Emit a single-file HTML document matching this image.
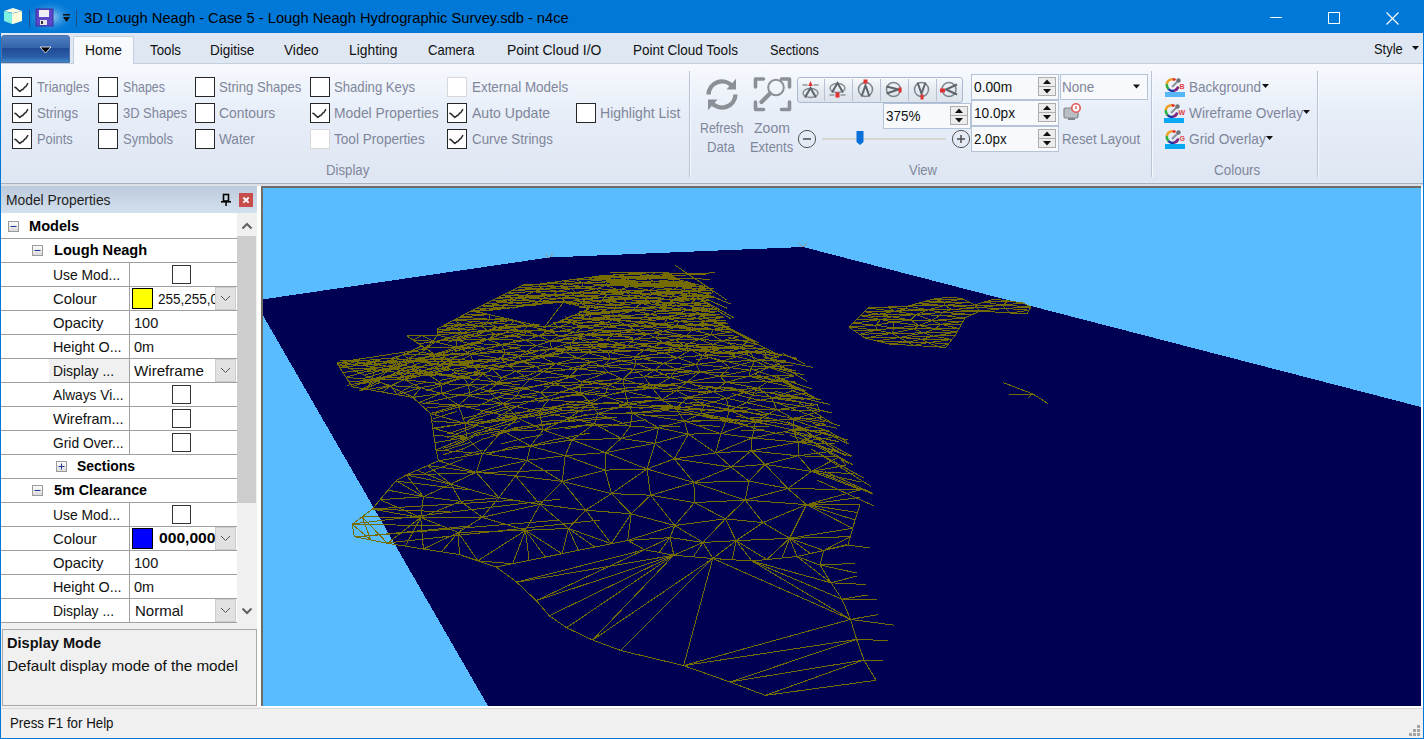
<!DOCTYPE html>
<html><head><meta charset="utf-8"><title>n4ce</title>
<style>
html,body{margin:0;padding:0;width:1424px;height:739px;overflow:hidden;background:#0078d7;}
body{position:relative;font-family:"Liberation Sans",sans-serif;}
.r{position:absolute;}
.t{position:absolute;white-space:nowrap;line-height:1.117;transform-origin:0 0;}
svg{overflow:visible}
</style></head><body>
<div class="r" style="left:0px;top:0px;width:1424px;height:739px;background:#0078d7;"></div>
<div class="r" style="left:1px;top:33px;width:1422px;height:30px;background:#dfe7f3;"></div>
<div class="r" style="left:1px;top:63px;width:1422px;height:119px;background:linear-gradient(#f7f9fe,#e7eef8 42%,#dee6f3);"></div>
<div class="r" style="left:1px;top:182px;width:1422px;height:1px;background:#e6ebf3;"></div>
<div class="r" style="left:1px;top:183px;width:1422px;height:1px;background:#a3b1c4;"></div>
<div class="r" style="left:1px;top:184px;width:1422px;height:3px;background:#dde0e6;"></div>
<div class="r" style="left:1px;top:187px;width:1422px;height:521px;background:#f0f0f0;"></div>
<div class="r" style="left:1px;top:708px;width:1422px;height:1px;background:#d9d9d9;"></div>
<div class="r" style="left:1px;top:709px;width:1422px;height:29px;background:#f0f0f0;"></div>
<svg class="r" style="left:0;top:0" width="90" height="33">
<defs><radialGradient id="glow" cx="0.5" cy="0.5" r="0.5"><stop offset="0" stop-color="#b9dcf7" stop-opacity="0.95"/><stop offset="1" stop-color="#0078d7" stop-opacity="0"/></radialGradient></defs>
<ellipse cx="50" cy="17" rx="26" ry="17" fill="url(#glow)"/>
<polygon points="4,11 13,8 22,11 13,13" fill="#fffde0"/>
<polygon points="4,11 12,13.5 12,24 4,21" fill="#7ef0e0"/>
<polygon points="13,13.5 22,11 22,21 13,24" fill="#fffcd8"/>
<line x1="12.5" y1="13" x2="12.5" y2="24" stroke="#e9f7f5" stroke-width="1"/>
<rect x="29" y="10" width="1" height="17" fill="#1b4f86"/>
<rect x="36" y="9" width="17" height="17" fill="#5b48c8"/>
<rect x="36" y="9" width="17" height="17" fill="none" stroke="#3d2f9e" stroke-width="1"/>
<rect x="39" y="10" width="10" height="7" fill="#eef0f6"/>
<rect x="40" y="20" width="7" height="5" fill="#e5e5ea"/>
<rect x="41" y="21" width="2" height="3" fill="#333"/>
<rect x="63" y="14" width="7" height="1.5" fill="#111"/>
<polygon points="63,17 70,17 66.5,22" fill="#111"/>
<rect x="76" y="10" width="1" height="17" fill="#1b4f86"/>
</svg>
<div class="t" style="left:83.80px;top:10.42px;font-size:15px;color:#000;transform:scaleX(0.9792);">3D Lough Neagh - Case 5 - Lough Neagh Hydrographic Survey.sdb - n4ce</div>
<div class="r" style="left:1270px;top:17px;width:12px;height:1px;background:#fff;"></div>
<div class="r" style="left:1328px;top:12px;width:12px;height:12px;border:1px solid #fff;box-sizing:border-box;"></div>
<svg class="r" style="left:1380px;top:6px" width="26" height="24"><path d="M6.5 6.5 L18.5 18.5 M18.5 6.5 L6.5 18.5" stroke="#fff" stroke-width="1.1"/></svg>
<div class="r" style="left:1px;top:35px;width:69px;height:28px;border:1px solid #4d6fa6;border-radius:3px 3px 0 0;box-sizing:border-box;background:linear-gradient(#4f7fc2,#3464aa 45%,#1f4a94 46%,#2b5ea8 80%,#3d86c8);"></div>
<svg class="r" style="left:38px;top:44px" width="16" height="12"><polygon points="2,3 13,3 7.5,9" fill="#000" stroke="#fff" stroke-width="0.8"/></svg>
<div class="r" style="left:73px;top:36px;width:61px;height:28px;background:linear-gradient(#f8fafd,#f5f8fc);border:1px solid #c2cfe0;border-bottom:none;border-radius:2px 2px 0 0;box-sizing:border-box;"></div>
<div class="r" style="left:1px;top:63px;width:1422px;height:1px;background:#c3cedf;"></div>
<div class="r" style="left:74px;top:63px;width:59px;height:1px;background:#f7f9fd;"></div>
<div class="t" style="left:85.00px;top:41.88px;font-size:14.5px;color:#111;transform:scaleX(0.9557);">Home</div>
<div class="t" style="left:150.00px;top:41.88px;font-size:14.5px;color:#111;transform:scaleX(0.9156);">Tools</div>
<div class="t" style="left:210.40px;top:41.88px;font-size:14.5px;color:#111;transform:scaleX(0.9315);">Digitise</div>
<div class="t" style="left:284.00px;top:41.88px;font-size:14.5px;color:#111;transform:scaleX(0.9422);">Video</div>
<div class="t" style="left:348.50px;top:41.88px;font-size:14.5px;color:#111;transform:scaleX(0.9543);">Lighting</div>
<div class="t" style="left:428.00px;top:41.88px;font-size:14.5px;color:#111;transform:scaleX(0.9008);">Camera</div>
<div class="t" style="left:506.50px;top:41.88px;font-size:14.5px;color:#111;transform:scaleX(0.9592);">Point Cloud I/O</div>
<div class="t" style="left:633.40px;top:41.88px;font-size:14.5px;color:#111;transform:scaleX(0.9317);">Point Cloud Tools</div>
<div class="t" style="left:770.20px;top:41.88px;font-size:14.5px;color:#111;transform:scaleX(0.8812);">Sections</div>
<div class="t" style="left:1374.00px;top:40.88px;font-size:14.5px;color:#111;transform:scaleX(0.8896);">Style</div>
<svg class="r" style="left:1410px;top:43px" width="12" height="10"><polygon points="2,3 9,3 5.5,7" fill="#111"/></svg>
<svg class="r" style="left:12px;top:77px" width="20" height="20"><rect x="0.5" y="0.5" width="19" height="19" fill="#fff" stroke="#262626" stroke-width="1"/><path d="M2.3 10.2 L3.5 10.4 L7.8 14.5 L10 12.6 L11 12.4 L12.8 10 L13.8 9.6 L16 6.2" fill="none" stroke="#2a2a2a" stroke-width="1.5" stroke-linejoin="round"/></svg>
<div class="t" style="left:36.50px;top:78.88px;font-size:14.5px;color:#80869a;transform:scaleX(0.8851);">Triangles</div>
<svg class="r" style="left:12px;top:103px" width="20" height="20"><rect x="0.5" y="0.5" width="19" height="19" fill="#fff" stroke="#262626" stroke-width="1"/><path d="M2.3 10.2 L3.5 10.4 L7.8 14.5 L10 12.6 L11 12.4 L12.8 10 L13.8 9.6 L16 6.2" fill="none" stroke="#2a2a2a" stroke-width="1.5" stroke-linejoin="round"/></svg>
<div class="t" style="left:36.50px;top:104.88px;font-size:14.5px;color:#80869a;transform:scaleX(0.9092);">Strings</div>
<svg class="r" style="left:12px;top:129px" width="20" height="20"><rect x="0.5" y="0.5" width="19" height="19" fill="#fff" stroke="#262626" stroke-width="1"/><path d="M2.3 10.2 L3.5 10.4 L7.8 14.5 L10 12.6 L11 12.4 L12.8 10 L13.8 9.6 L16 6.2" fill="none" stroke="#2a2a2a" stroke-width="1.5" stroke-linejoin="round"/></svg>
<div class="t" style="left:36.50px;top:130.88px;font-size:14.5px;color:#80869a;transform:scaleX(0.8881);">Points</div>
<svg class="r" style="left:98px;top:77px" width="20" height="20"><rect x="0.5" y="0.5" width="19" height="19" fill="#fff" stroke="#262626" stroke-width="1"/></svg>
<div class="t" style="left:122.50px;top:78.88px;font-size:14.5px;color:#80869a;transform:scaleX(0.8504);">Shapes</div>
<svg class="r" style="left:98px;top:103px" width="20" height="20"><rect x="0.5" y="0.5" width="19" height="19" fill="#fff" stroke="#262626" stroke-width="1"/></svg>
<div class="t" style="left:122.50px;top:104.88px;font-size:14.5px;color:#80869a;transform:scaleX(0.8917);">3D Shapes</div>
<svg class="r" style="left:98px;top:129px" width="20" height="20"><rect x="0.5" y="0.5" width="19" height="19" fill="#fff" stroke="#262626" stroke-width="1"/></svg>
<div class="t" style="left:122.50px;top:130.88px;font-size:14.5px;color:#80869a;transform:scaleX(0.8992);">Symbols</div>
<svg class="r" style="left:195px;top:77px" width="20" height="20"><rect x="0.5" y="0.5" width="19" height="19" fill="#fff" stroke="#262626" stroke-width="1"/></svg>
<div class="t" style="left:219.00px;top:78.88px;font-size:14.5px;color:#80869a;transform:scaleX(0.9049);">String Shapes</div>
<svg class="r" style="left:195px;top:103px" width="20" height="20"><rect x="0.5" y="0.5" width="19" height="19" fill="#fff" stroke="#262626" stroke-width="1"/></svg>
<div class="t" style="left:219.00px;top:104.88px;font-size:14.5px;color:#80869a;transform:scaleX(0.9563);">Contours</div>
<svg class="r" style="left:195px;top:129px" width="20" height="20"><rect x="0.5" y="0.5" width="19" height="19" fill="#fff" stroke="#262626" stroke-width="1"/></svg>
<div class="t" style="left:219.00px;top:130.88px;font-size:14.5px;color:#80869a;transform:scaleX(0.9388);">Water</div>
<svg class="r" style="left:310px;top:77px" width="20" height="20"><rect x="0.5" y="0.5" width="19" height="19" fill="#fff" stroke="#262626" stroke-width="1"/></svg>
<div class="t" style="left:334.00px;top:78.88px;font-size:14.5px;color:#80869a;transform:scaleX(0.9054);">Shading Keys</div>
<svg class="r" style="left:310px;top:103px" width="20" height="20"><rect x="0.5" y="0.5" width="19" height="19" fill="#fff" stroke="#262626" stroke-width="1"/><path d="M2.3 10.2 L3.5 10.4 L7.8 14.5 L10 12.6 L11 12.4 L12.8 10 L13.8 9.6 L16 6.2" fill="none" stroke="#2a2a2a" stroke-width="1.5" stroke-linejoin="round"/></svg>
<div class="t" style="left:334.00px;top:104.88px;font-size:14.5px;color:#80869a;transform:scaleX(0.9542);">Model Properties</div>
<svg class="r" style="left:310px;top:129px" width="20" height="20"><rect x="0.5" y="0.5" width="19" height="19" fill="#fff" stroke="#d8d8d8" stroke-width="1"/></svg>
<div class="t" style="left:334.00px;top:130.88px;font-size:14.5px;color:#80869a;transform:scaleX(0.9378);">Tool Properties</div>
<svg class="r" style="left:447px;top:77px" width="20" height="20"><rect x="0.5" y="0.5" width="19" height="19" fill="#fff" stroke="#d8d8d8" stroke-width="1"/></svg>
<div class="t" style="left:471.60px;top:78.88px;font-size:14.5px;color:#80869a;transform:scaleX(0.9243);">External Models</div>
<svg class="r" style="left:447px;top:103px" width="20" height="20"><rect x="0.5" y="0.5" width="19" height="19" fill="#fff" stroke="#262626" stroke-width="1"/><path d="M2.3 10.2 L3.5 10.4 L7.8 14.5 L10 12.6 L11 12.4 L12.8 10 L13.8 9.6 L16 6.2" fill="none" stroke="#2a2a2a" stroke-width="1.5" stroke-linejoin="round"/></svg>
<div class="t" style="left:471.60px;top:104.88px;font-size:14.5px;color:#80869a;transform:scaleX(0.9687);">Auto Update</div>
<svg class="r" style="left:447px;top:129px" width="20" height="20"><rect x="0.5" y="0.5" width="19" height="19" fill="#fff" stroke="#262626" stroke-width="1"/><path d="M2.3 10.2 L3.5 10.4 L7.8 14.5 L10 12.6 L11 12.4 L12.8 10 L13.8 9.6 L16 6.2" fill="none" stroke="#2a2a2a" stroke-width="1.5" stroke-linejoin="round"/></svg>
<div class="t" style="left:471.60px;top:130.88px;font-size:14.5px;color:#80869a;transform:scaleX(0.9207);">Curve Strings</div>
<svg class="r" style="left:576px;top:103px" width="20" height="20"><rect x="0.5" y="0.5" width="19" height="19" fill="#fff" stroke="#262626" stroke-width="1"/></svg>
<div class="t" style="left:600.00px;top:104.68px;font-size:14.5px;color:#80869a;transform:scaleX(0.9673);">Highlight List</div>
<div class="t" style="left:325.70px;top:161.88px;font-size:14.5px;color:#80869a;transform:scaleX(0.9104);">Display</div>
<div class="r" style="left:689px;top:71px;width:1px;height:106px;background:#b9c5d6;"></div>
<div class="r" style="left:690px;top:71px;width:1px;height:106px;background:#f5f8fc;"></div>
<svg class="r" style="left:700px;top:72px" width="100" height="45">
<g fill="none" stroke="#8c9096" stroke-width="4.4">
<path d="M8.5 22.5 A13.5 13.5 0 0 1 32.5 14.5"/>
<path d="M35.5 22.5 A13.5 13.5 0 0 1 11.5 30.5"/>
</g>
<g fill="#8c9096"><polygon points="26.5,17.6 36,6.8 36,17.6"/><polygon points="17.5,27.4 8,38.2 8,27.4"/></g>
<g fill="none" stroke="#8c9096" stroke-width="3.6" stroke-linecap="round" stroke-linejoin="round">
<path d="M55.5 15 V7 H63.5"/><path d="M81.5 7 H89.5 V15"/>
<path d="M55.5 30 V37.5 H63.5"/><path d="M81.5 37.5 H89.5 V30"/>
</g>
<circle cx="76" cy="15.5" r="7.8" fill="none" stroke="#8c9096" stroke-width="2"/>
<line x1="70" y1="21.5" x2="61.5" y2="30" stroke="#8c9096" stroke-width="4.2" stroke-linecap="round"/>
</svg>
<div class="t" style="left:699.60px;top:119.88px;font-size:14.5px;color:#80869a;transform:scaleX(0.8552);">Refresh</div>
<div class="t" style="left:707.40px;top:138.88px;font-size:14.5px;color:#80869a;transform:scaleX(0.9065);">Data</div>
<div class="t" style="left:754.00px;top:119.88px;font-size:14.5px;color:#80869a;transform:scaleX(0.9717);">Zoom</div>
<div class="t" style="left:750.40px;top:138.88px;font-size:14.5px;color:#80869a;transform:scaleX(0.8913);">Extents</div>
<div class="r" style="left:797px;top:77px;width:166px;height:26px;border:1px solid #a9b9d2;border-radius:3px;box-sizing:border-box;background:linear-gradient(#f7f9fc,#e4e9f1 55%,#dde3ec);"></div>
<div class="r" style="left:823.5px;top:79px;width:1px;height:22px;background:#b7c3d3;"></div>
<div class="r" style="left:851.5px;top:79px;width:1px;height:22px;background:#b7c3d3;"></div>
<div class="r" style="left:879.5px;top:79px;width:1px;height:22px;background:#b7c3d3;"></div>
<div class="r" style="left:907.5px;top:79px;width:1px;height:22px;background:#b7c3d3;"></div>
<div class="r" style="left:935.5px;top:79px;width:1px;height:22px;background:#b7c3d3;"></div>
<svg class="r" style="left:0;top:0" width="1000" height="110"><g transform="translate(810.5,89.5)"><ellipse cx="0" cy="3.5" rx="7.5" ry="4.5" fill="none" stroke="#858c92" stroke-width="1.4"/><path d="M-5.5 8 L0 -1.5 L5.5 8" fill="none" stroke="#5d646a" stroke-width="2"/><path d="M-8 -4.5 H-3 M3 -4.5 H8" stroke="#8f979d" stroke-width="1.4"/><polygon points="-2.2,-3.5 2.2,-3.5 0,-8.5" fill="#e03030"/></g><g transform="translate(837.5,89.5)"><ellipse cx="0" cy="-1.5" rx="7.5" ry="4.5" fill="none" stroke="#858c92" stroke-width="1.4"/><path d="M-5.5 3 L0 -6.5 L5.5 3" fill="none" stroke="#5d646a" stroke-width="2"/><path d="M-8 5.5 H-3 M3 5.5 H8" stroke="#8f979d" stroke-width="1.4"/><rect x="-2" y="3" width="4" height="5" fill="#e03030"/></g><g transform="translate(865.5,89.5)"><circle r="7" fill="none" stroke="#7d858c" stroke-width="1.5"/><path d="M-4 7 L0 -4 L4 7" fill="none" stroke="#5d646a" stroke-width="2"/><rect x="-2" y="-10" width="4" height="4" fill="#e03030"/></g><g transform="translate(893.5,89.5)"><circle r="7" fill="none" stroke="#7d858c" stroke-width="1.5"/><path d="M-7 -3 L5 0 L-7 4" fill="none" stroke="#5d646a" stroke-width="2"/><rect x="5" y="-2" width="3" height="5" fill="#e03030"/></g><g transform="translate(921.5,89.5)"><circle r="7" fill="none" stroke="#7d858c" stroke-width="1.5"/><path d="M-4 -7 L0 4 L4 -7" fill="none" stroke="#5d646a" stroke-width="2"/><rect x="-1" y="5" width="3" height="5" fill="#e03030"/></g><g transform="translate(949,89.5)"><circle r="7" fill="none" stroke="#7d858c" stroke-width="1.5"/><path d="M8 -5 L-3 0 L8 5" fill="none" stroke="#5d646a" stroke-width="2"/><rect x="-9" y="-1" width="5" height="4" fill="#e03030"/></g></svg>
<svg class="r" style="left:795px;top:125px" width="180" height="28">
<circle cx="12" cy="14" r="8.6" fill="none" stroke="#555" stroke-width="1"/>
<line x1="8" y1="14" x2="16" y2="14" stroke="#555" stroke-width="1.6"/>
<rect x="27" y="13" width="124" height="2" fill="#d6d6d0"/>
<path d="M61.5 6 H68.5 V17 L65 20 L61.5 17 Z" fill="#0a6fd8"/>
<circle cx="166" cy="14" r="8.6" fill="none" stroke="#555" stroke-width="1"/>
<line x1="162" y1="14" x2="170" y2="14" stroke="#555" stroke-width="1.6"/>
<line x1="166" y1="10" x2="166" y2="18" stroke="#555" stroke-width="1.6"/>
</svg>
<div class="r" style="left:883px;top:103px;width:88px;height:26px;border:1px solid #b5c3d8;box-sizing:border-box;background:#f7f9fc;"></div>
<svg class="r" style="left:950px;top:106px" width="18" height="19">
<rect x="0.5" y="0.5" width="17" height="9.0" fill="#ececec" stroke="#adadad"/>
<rect x="0.5" y="9.5" width="17" height="9.0" fill="#ececec" stroke="#adadad"/>
<polygon points="5.0,7.0 13.0,7.0 9.0,2.5" fill="#111"/>
<polygon points="5.0,12.0 13.0,12.0 9.0,16.5" fill="#111"/>
</svg>
<div class="r" style="left:971px;top:74px;width:88px;height:26px;border:1px solid #b5c3d8;box-sizing:border-box;background:#f7f9fc;"></div>
<svg class="r" style="left:1038px;top:77px" width="18" height="19">
<rect x="0.5" y="0.5" width="17" height="9.0" fill="#ececec" stroke="#adadad"/>
<rect x="0.5" y="9.5" width="17" height="9.0" fill="#ececec" stroke="#adadad"/>
<polygon points="5.0,7.0 13.0,7.0 9.0,2.5" fill="#111"/>
<polygon points="5.0,12.0 13.0,12.0 9.0,16.5" fill="#111"/>
</svg>
<div class="r" style="left:971px;top:100px;width:88px;height:26px;border:1px solid #b5c3d8;box-sizing:border-box;background:#f7f9fc;"></div>
<svg class="r" style="left:1038px;top:103px" width="18" height="19">
<rect x="0.5" y="0.5" width="17" height="9.0" fill="#ececec" stroke="#adadad"/>
<rect x="0.5" y="9.5" width="17" height="9.0" fill="#ececec" stroke="#adadad"/>
<polygon points="5.0,7.0 13.0,7.0 9.0,2.5" fill="#111"/>
<polygon points="5.0,12.0 13.0,12.0 9.0,16.5" fill="#111"/>
</svg>
<div class="r" style="left:971px;top:126px;width:88px;height:26px;border:1px solid #b5c3d8;box-sizing:border-box;background:#f7f9fc;"></div>
<svg class="r" style="left:1038px;top:129px" width="18" height="19">
<rect x="0.5" y="0.5" width="17" height="9.0" fill="#ececec" stroke="#adadad"/>
<rect x="0.5" y="9.5" width="17" height="9.0" fill="#ececec" stroke="#adadad"/>
<polygon points="5.0,7.0 13.0,7.0 9.0,2.5" fill="#111"/>
<polygon points="5.0,12.0 13.0,12.0 9.0,16.5" fill="#111"/>
</svg>
<div class="r" style="left:1060px;top:74px;width:88px;height:26px;border:1px solid #b5c3d8;box-sizing:border-box;background:#f7f9fc;"></div>
<svg class="r" style="left:1130px;top:80px" width="14" height="12"><polygon points="3,4.5 10,4.5 6.5,8.5" fill="#111"/></svg>
<div class="t" style="left:886.00px;top:108.38px;font-size:14.5px;color:#111;transform:scaleX(0.9267);">375%</div>
<div class="t" style="left:974.40px;top:78.88px;font-size:14.5px;color:#111;transform:scaleX(0.9477);">0.00m</div>
<div class="t" style="left:974.40px;top:104.88px;font-size:14.5px;color:#111;transform:scaleX(0.9410);">10.0px</div>
<div class="t" style="left:974.40px;top:130.88px;font-size:14.5px;color:#111;transform:scaleX(0.9195);">2.0px</div>
<div class="t" style="left:1062.30px;top:78.88px;font-size:14.5px;color:#80869a;transform:scaleX(0.9320);">None</div>
<svg class="r" style="left:1060px;top:101px" width="24" height="22">
<rect x="4" y="7" width="14" height="10" rx="1.5" fill="#b9bec4" stroke="#7f868c" stroke-width="1.2"/>
<rect x="8" y="17" width="7" height="2" fill="#7f868c"/>
<circle cx="16" cy="7" r="4.2" fill="#fff" stroke="#e05656" stroke-width="1.6"/>
<rect x="15.3" y="5" width="1.4" height="3" fill="#e05656"/>
</svg>
<div class="t" style="left:1062.30px;top:130.88px;font-size:14.5px;color:#80869a;transform:scaleX(0.9137);">Reset Layout</div>
<div class="t" style="left:908.70px;top:161.88px;font-size:14.5px;color:#80869a;transform:scaleX(0.8982);">View</div>
<div class="r" style="left:1151px;top:71px;width:1px;height:106px;background:#b9c5d6;"></div>
<div class="r" style="left:1152px;top:71px;width:1px;height:106px;background:#f5f8fc;"></div>
<svg class="r" style="left:1165px;top:77px" width="24" height="22">
<g fill="none" stroke-width="2.6">
<path d="M7.5 2.2 A5.8 5.8 0 0 0 1.8 7" stroke="#f0a020"/>
<path d="M1.8 7 A5.8 5.8 0 0 0 3.5 12" stroke="#30b040"/>
<path d="M3.5 12 A5.8 5.8 0 0 0 9 13.8" stroke="#2030a0"/>
<path d="M9 13.8 A5.8 5.8 0 0 0 13.2 9.5" stroke="#802080"/>
<path d="M7.5 2.2 A5.8 5.8 0 0 1 10.5 3" stroke="#e03020"/>
</g>
<path d="M7 10 L12.5 4.5" stroke="#8c939a" stroke-width="2.2"/>
<circle cx="13.5" cy="3.5" r="2.2" fill="#6c7378"/>
<text x="14.5" y="12" font-family="Liberation Sans" font-size="7" font-weight="bold" fill="#e04040">B</text>
<rect x="0" y="15" width="20" height="5" fill="#56b6f7"/>
</svg>
<svg class="r" style="left:1164px;top:103px" width="24" height="22">
<g fill="none" stroke-width="2.6">
<path d="M7.5 2.2 A5.8 5.8 0 0 0 1.8 7" stroke="#f0a020"/>
<path d="M1.8 7 A5.8 5.8 0 0 0 3.5 12" stroke="#30b040"/>
<path d="M3.5 12 A5.8 5.8 0 0 0 9 13.8" stroke="#2030a0"/>
<path d="M9 13.8 A5.8 5.8 0 0 0 13.2 9.5" stroke="#802080"/>
<path d="M7.5 2.2 A5.8 5.8 0 0 1 10.5 3" stroke="#e03020"/>
</g>
<path d="M7 10 L12.5 4.5" stroke="#8c939a" stroke-width="2.2"/>
<circle cx="13.5" cy="3.5" r="2.2" fill="#6c7378"/>
<text x="14.5" y="12" font-family="Liberation Sans" font-size="7" font-weight="bold" fill="#e04040">W</text>
<rect x="0" y="15" width="20" height="5" fill="#0aa9f5"/>
</svg>
<svg class="r" style="left:1165px;top:129px" width="24" height="22">
<g fill="none" stroke-width="2.6">
<path d="M7.5 2.2 A5.8 5.8 0 0 0 1.8 7" stroke="#f0a020"/>
<path d="M1.8 7 A5.8 5.8 0 0 0 3.5 12" stroke="#30b040"/>
<path d="M3.5 12 A5.8 5.8 0 0 0 9 13.8" stroke="#2030a0"/>
<path d="M9 13.8 A5.8 5.8 0 0 0 13.2 9.5" stroke="#802080"/>
<path d="M7.5 2.2 A5.8 5.8 0 0 1 10.5 3" stroke="#e03020"/>
</g>
<path d="M7 10 L12.5 4.5" stroke="#8c939a" stroke-width="2.2"/>
<circle cx="13.5" cy="3.5" r="2.2" fill="#6c7378"/>
<text x="14.5" y="12" font-family="Liberation Sans" font-size="7" font-weight="bold" fill="#e04040">G</text>
<rect x="0" y="15" width="20" height="5" fill="#0aa9f5"/>
</svg>
<div class="t" style="left:1189.00px;top:78.88px;font-size:14.5px;color:#80869a;transform:scaleX(0.9307);">Background</div>
<div class="t" style="left:1189.00px;top:104.88px;font-size:14.5px;color:#80869a;transform:scaleX(0.9433);">Wireframe Overlay</div>
<div class="t" style="left:1189.00px;top:130.88px;font-size:14.5px;color:#80869a;transform:scaleX(0.9429);">Grid Overlay</div>
<svg class="r" style="left:1260px;top:80px" width="60" height="70">
<polygon points="2,4 9,4 5.5,8" fill="#111"/>
<polygon points="43,30 50,30 46.5,34" fill="#111"/>
<polygon points="6,56 13,56 9.5,60" fill="#111"/>
</svg>
<div class="t" style="left:1213.50px;top:161.88px;font-size:14.5px;color:#80869a;transform:scaleX(0.9269);">Colours</div>
<div class="r" style="left:1317px;top:71px;width:1px;height:106px;background:#b9c5d6;"></div>
<div class="r" style="left:1318px;top:71px;width:1px;height:106px;background:#f5f8fc;"></div>
<div class="r" style="left:1px;top:186px;width:256px;height:27px;background:linear-gradient(#bccbdc,#d3e0ee);"></div>
<div class="r" style="left:257px;top:186px;width:4px;height:521px;background:#fff;"></div>
<div class="t" style="left:5.50px;top:191.88px;font-size:14.5px;color:#1e1e1e;transform:scaleX(0.9533);">Model Properties</div>
<svg class="r" style="left:219px;top:193px" width="14" height="14">
<rect x="4.5" y="1.5" width="5" height="6.5" fill="none" stroke="#000" stroke-width="1.6"/>
<rect x="2" y="8" width="10" height="1.6" fill="#000"/>
<rect x="6.3" y="9" width="1.5" height="4" fill="#000"/>
</svg>
<svg class="r" style="left:239px;top:193px" width="14" height="14">
<rect width="14" height="14" fill="#c94c4c"/>
<path d="M4.3 4.5 L9.7 9.7 M9.7 4.5 L4.3 9.7" stroke="#fff" stroke-width="1.8"/>
</svg>
<div class="r" style="left:1px;top:213px;width:236px;height:410px;background:#fff;"></div>
<div class="r" style="left:1px;top:238px;width:236px;height:1px;background:#a0a0a0;"></div>
<div class="r" style="left:1px;top:262px;width:236px;height:1px;background:#a0a0a0;"></div>
<div class="r" style="left:1px;top:286px;width:236px;height:1px;background:#a0a0a0;"></div>
<div class="r" style="left:1px;top:310px;width:236px;height:1px;background:#a0a0a0;"></div>
<div class="r" style="left:1px;top:334px;width:236px;height:1px;background:#a0a0a0;"></div>
<div class="r" style="left:1px;top:358px;width:236px;height:1px;background:#a0a0a0;"></div>
<div class="r" style="left:1px;top:382px;width:236px;height:1px;background:#a0a0a0;"></div>
<div class="r" style="left:1px;top:406px;width:236px;height:1px;background:#a0a0a0;"></div>
<div class="r" style="left:1px;top:430px;width:236px;height:1px;background:#a0a0a0;"></div>
<div class="r" style="left:1px;top:454px;width:236px;height:1px;background:#a0a0a0;"></div>
<div class="r" style="left:1px;top:478px;width:236px;height:1px;background:#a0a0a0;"></div>
<div class="r" style="left:1px;top:502px;width:236px;height:1px;background:#a0a0a0;"></div>
<div class="r" style="left:1px;top:526px;width:236px;height:1px;background:#a0a0a0;"></div>
<div class="r" style="left:1px;top:550px;width:236px;height:1px;background:#a0a0a0;"></div>
<div class="r" style="left:1px;top:574px;width:236px;height:1px;background:#a0a0a0;"></div>
<div class="r" style="left:1px;top:598px;width:236px;height:1px;background:#a0a0a0;"></div>
<div class="r" style="left:1px;top:622px;width:236px;height:1px;background:#a0a0a0;"></div>
<div class="r" style="left:129px;top:262px;width:1px;height:24px;background:#a0a0a0;"></div>
<div class="r" style="left:129px;top:286px;width:1px;height:24px;background:#a0a0a0;"></div>
<div class="r" style="left:129px;top:310px;width:1px;height:24px;background:#a0a0a0;"></div>
<div class="r" style="left:129px;top:334px;width:1px;height:24px;background:#a0a0a0;"></div>
<div class="r" style="left:129px;top:358px;width:1px;height:24px;background:#a0a0a0;"></div>
<div class="r" style="left:129px;top:382px;width:1px;height:24px;background:#a0a0a0;"></div>
<div class="r" style="left:129px;top:406px;width:1px;height:24px;background:#a0a0a0;"></div>
<div class="r" style="left:129px;top:430px;width:1px;height:24px;background:#a0a0a0;"></div>
<div class="r" style="left:129px;top:502px;width:1px;height:24px;background:#a0a0a0;"></div>
<div class="r" style="left:129px;top:526px;width:1px;height:24px;background:#a0a0a0;"></div>
<div class="r" style="left:129px;top:550px;width:1px;height:24px;background:#a0a0a0;"></div>
<div class="r" style="left:129px;top:574px;width:1px;height:24px;background:#a0a0a0;"></div>
<div class="r" style="left:129px;top:598px;width:1px;height:24px;background:#a0a0a0;"></div>
<div class="r" style="left:49px;top:359px;width:80px;height:23px;background:#f0f0f0;"></div>
<svg class="r" style="left:8px;top:221px" width="12" height="12">
<defs><linearGradient id="eg" x1="0" y1="0" x2="0" y2="1"><stop offset="0" stop-color="#fff"/><stop offset="1" stop-color="#d8d8d8"/></linearGradient></defs>
<rect x="0.5" y="0.5" width="10" height="10" fill="url(#eg)" stroke="#9a9a9a"/>
<rect x="2.5" y="5" width="6" height="1" fill="#23379a"/>

</svg>
<svg class="r" style="left:32px;top:245px" width="12" height="12">
<defs><linearGradient id="eg" x1="0" y1="0" x2="0" y2="1"><stop offset="0" stop-color="#fff"/><stop offset="1" stop-color="#d8d8d8"/></linearGradient></defs>
<rect x="0.5" y="0.5" width="10" height="10" fill="url(#eg)" stroke="#9a9a9a"/>
<rect x="2.5" y="5" width="6" height="1" fill="#23379a"/>

</svg>
<svg class="r" style="left:56px;top:461px" width="12" height="12">
<defs><linearGradient id="eg" x1="0" y1="0" x2="0" y2="1"><stop offset="0" stop-color="#fff"/><stop offset="1" stop-color="#d8d8d8"/></linearGradient></defs>
<rect x="0.5" y="0.5" width="10" height="10" fill="url(#eg)" stroke="#9a9a9a"/>
<rect x="2.5" y="5" width="6" height="1" fill="#23379a"/>
<rect x="5" y="2.5" width="1" height="6" fill="#23379a"/>
</svg>
<svg class="r" style="left:32px;top:485px" width="12" height="12">
<defs><linearGradient id="eg" x1="0" y1="0" x2="0" y2="1"><stop offset="0" stop-color="#fff"/><stop offset="1" stop-color="#d8d8d8"/></linearGradient></defs>
<rect x="0.5" y="0.5" width="10" height="10" fill="url(#eg)" stroke="#9a9a9a"/>
<rect x="2.5" y="5" width="6" height="1" fill="#23379a"/>

</svg>
<div class="t" style="left:29.40px;top:218.43px;font-size:15px;color:#000;font-weight:bold;transform:scaleX(0.9715);">Models</div>
<div class="t" style="left:53.80px;top:242.43px;font-size:15px;color:#000;font-weight:bold;transform:scaleX(0.9724);">Lough Neagh</div>
<div class="t" style="left:77.00px;top:458.43px;font-size:15px;color:#000;font-weight:bold;transform:scaleX(0.9273);">Sections</div>
<div class="t" style="left:53.60px;top:482.43px;font-size:15px;color:#000;font-weight:bold;transform:scaleX(0.9541);">5m Clearance</div>
<div class="t" style="left:53.40px;top:266.88px;font-size:14.5px;color:#111;transform:scaleX(0.9571);">Use Mod...</div>
<div class="t" style="left:53.40px;top:290.88px;font-size:14.5px;color:#111;transform:scaleX(1.0210);">Colour</div>
<div class="t" style="left:53.40px;top:314.88px;font-size:14.5px;color:#111;transform:scaleX(1.0253);">Opacity</div>
<div class="t" style="left:53.40px;top:338.88px;font-size:14.5px;color:#111;transform:scaleX(0.9898);">Height O...</div>
<div class="t" style="left:53.40px;top:362.88px;font-size:14.5px;color:#111;transform:scaleX(0.9583);">Display ...</div>
<div class="t" style="left:53.40px;top:386.88px;font-size:14.5px;color:#111;transform:scaleX(0.9454);">Always Vi...</div>
<div class="t" style="left:53.40px;top:410.88px;font-size:14.5px;color:#111;transform:scaleX(0.9957);">Wirefram...</div>
<div class="t" style="left:53.40px;top:434.88px;font-size:14.5px;color:#111;transform:scaleX(0.9528);">Grid Over...</div>
<div class="t" style="left:53.40px;top:506.88px;font-size:14.5px;color:#111;transform:scaleX(0.9571);">Use Mod...</div>
<div class="t" style="left:53.40px;top:530.88px;font-size:14.5px;color:#111;transform:scaleX(1.0210);">Colour</div>
<div class="t" style="left:53.40px;top:554.88px;font-size:14.5px;color:#111;transform:scaleX(1.0253);">Opacity</div>
<div class="t" style="left:53.40px;top:578.88px;font-size:14.5px;color:#111;transform:scaleX(0.9898);">Height O...</div>
<div class="t" style="left:53.40px;top:602.88px;font-size:14.5px;color:#111;transform:scaleX(0.9583);">Display ...</div>
<div class="r" style="left:172px;top:265px;width:19px;height:19px;border:1px solid #333;box-sizing:border-box;background:#fff;"></div>
<div class="r" style="left:172px;top:385px;width:19px;height:19px;border:1px solid #333;box-sizing:border-box;background:#fff;"></div>
<div class="r" style="left:172px;top:409px;width:19px;height:19px;border:1px solid #333;box-sizing:border-box;background:#fff;"></div>
<div class="r" style="left:172px;top:433px;width:19px;height:19px;border:1px solid #333;box-sizing:border-box;background:#fff;"></div>
<div class="r" style="left:172px;top:505px;width:19px;height:19px;border:1px solid #333;box-sizing:border-box;background:#fff;"></div>
<div class="r" style="left:132px;top:288px;width:21px;height:21px;background:#ff0;border:1px solid #000;box-sizing:border-box;"></div>
<div class="r" style="left:155px;top:287px;width:60px;height:23px;overflow:hidden">
<div class="t" style="left:3.40px;top:3.88px;font-size:14.5px;color:#111;transform:scaleX(0.9313);">255,255,0</div>
</div>
<svg class="r" style="left:215px;top:287px" width="21" height="23">
<rect x="0.5" y="0.5" width="20" height="22" fill="#e1e1e1" stroke="#cdcdcd"/>
<path d="M6 9 L10.5 13.5 L15 9" fill="none" stroke="#555" stroke-width="1"/>
</svg>
<div class="t" style="left:134.00px;top:314.88px;font-size:14.5px;color:#111;">100</div>
<div class="t" style="left:134.00px;top:338.88px;font-size:14.5px;color:#111;">0m</div>
<div class="t" style="left:134.00px;top:362.88px;font-size:14.5px;color:#111;transform:scaleX(1.0442);">Wireframe</div>
<svg class="r" style="left:215px;top:359px" width="21" height="23">
<rect x="0.5" y="0.5" width="20" height="22" fill="#e1e1e1" stroke="#cdcdcd"/>
<path d="M6 9 L10.5 13.5 L15 9" fill="none" stroke="#555" stroke-width="1"/>
</svg>
<div class="r" style="left:132px;top:528px;width:21px;height:21px;background:#00f;border:1px solid #000;box-sizing:border-box;"></div>
<div class="r" style="left:155px;top:527px;width:60px;height:23px;overflow:hidden">
<div class="t" style="left:3.50px;top:3.42px;font-size:15px;color:#000;font-weight:bold;transform:scaleX(1.0420);">000,000,255</div>
</div>
<svg class="r" style="left:215px;top:527px" width="21" height="23">
<rect x="0.5" y="0.5" width="20" height="22" fill="#e1e1e1" stroke="#cdcdcd"/>
<path d="M6 9 L10.5 13.5 L15 9" fill="none" stroke="#555" stroke-width="1"/>
</svg>
<div class="t" style="left:134.00px;top:554.88px;font-size:14.5px;color:#111;">100</div>
<div class="t" style="left:134.00px;top:578.88px;font-size:14.5px;color:#111;">0m</div>
<div class="t" style="left:134.60px;top:602.88px;font-size:14.5px;color:#111;transform:scaleX(1.0350);">Normal</div>
<svg class="r" style="left:215px;top:599px" width="21" height="23">
<rect x="0.5" y="0.5" width="20" height="22" fill="#e1e1e1" stroke="#cdcdcd"/>
<path d="M6 9 L10.5 13.5 L15 9" fill="none" stroke="#555" stroke-width="1"/>
</svg>
<div class="r" style="left:237px;top:214px;width:20px;height:409px;background:#f0f0f0;"></div>
<div class="r" style="left:237px;top:236px;width:19px;height:267px;background:#cdcdcd;"></div>
<svg class="r" style="left:237px;top:214px" width="20" height="409">
<path d="M5.5 14.5 L10 10 L14.5 14.5" fill="none" stroke="#606060" stroke-width="2"/>
<path d="M5.5 394.5 L10 399 L14.5 394.5" fill="none" stroke="#606060" stroke-width="2"/>
</svg>
<div class="r" style="left:1px;top:623px;width:256px;height:84px;background:#f0f0f0;"></div>
<div class="r" style="left:2px;top:629px;width:255px;height:77px;border:1px solid #a8a8a8;box-sizing:border-box;background:#f0f0f0;"></div>
<div class="t" style="left:7.00px;top:635.42px;font-size:15px;color:#111;font-weight:bold;transform:scaleX(0.9723);">Display Mode</div>
<div class="t" style="left:7.00px;top:657.88px;font-size:14.5px;color:#111;transform:scaleX(1.0536);">Default display mode of the model</div>
<div class="t" style="left:10.00px;top:714.88px;font-size:14.5px;color:#111;transform:scaleX(0.9175);">Press F1 for Help</div>
<svg class="r" style="left:1408px;top:724px" width="14" height="13"><g fill="#a5a5a5">
<rect x="9" y="1" width="3" height="3"/><rect x="5" y="5" width="3" height="3"/><rect x="9" y="5" width="3" height="3"/>
<rect x="1" y="9" width="3" height="3"/><rect x="5" y="9" width="3" height="3"/><rect x="9" y="9" width="3" height="3"/></g></svg>
<div class="r" style="left:261px;top:186px;width:1162px;height:522px;background:#fff;"></div>
<div class="r" style="left:261px;top:186px;width:1160px;height:2px;background:#6e6b68;"></div>
<div class="r" style="left:261px;top:186px;width:2px;height:520px;background:#6e6b68;"></div>
<svg class="r" style="left:263px;top:188px;overflow:hidden" width="1158" height="518" viewBox="263 188 1158 518" shape-rendering="crispEdges">
<rect x="263" y="188" width="1158" height="518" fill="#58bcff"/>
<polygon points="262,299.5 549,257.5 803,247 1421,407 1421,706 488,706 263,315.5" fill="#000052"/>
<path d="M562.3 481.4L515.5 475.8M749.0 481.1L731.1 467.1M420.7 517.5L423.5 496.7M550.3 341.2L577.7 338.7M470.4 353.7L444.3 359.1M615.7 305.0L634.6 307.7M413.0 340.0L407.0 336.0M668.0 272.0L670.7 274.3M745.1 500.1L787.9 488.6M454.0 320.0L463.1 325.5M673.3 276.7L649.2 278.8M486.6 303.2L501.3 305.4M575.4 279.2L596.1 280.0M670.7 274.3L673.3 276.7M748.7 340.1L722.0 340.8M590.0 342.3L577.7 338.7M674.8 525.5L725.4 518.8M500.7 358.8L472.7 365.8M577.9 358.0L538.4 355.9M512.6 290.2L533.6 291.6M540.0 284.0L557.9 286.6M712.8 558.5L693.3 556.9M538.4 355.9L518.9 356.7M638.4 283.4L619.2 283.8M758.2 343.9L740.1 348.3M542.7 298.3L514.3 297.7M693.3 556.9L673.8 555.2M587.2 277.6L615.2 277.0M715.6 452.9L720.9 433.6M433.8 435.4L432.8 428.2M725.7 382.3L749.6 376.1M437.0 335.0L456.8 340.2M486.8 322.5L514.0 320.5M514.1 302.7L501.3 305.4M602.6 300.8L603.6 297.6M571.9 288.6L557.6 291.3M607.7 281.9L613.9 279.2M581.3 381.8L623.0 379.3M596.5 288.7L600.7 291.7M655.3 337.7L634.3 339.4M638.4 283.4L629.9 286.2M487.9 391.0L517.3 395.7M665.0 353.1L683.7 345.7M749.0 481.1L745.1 500.1M487.9 330.5L456.5 329.0M615.9 308.0L601.5 309.7M518.2 418.2L543.3 429.9M437.0 335.0L433.3 341.3M582.7 282.9L607.7 281.9M518.2 418.2L539.1 411.5M594.8 547.0L578.4 550.4M665.0 353.1L690.6 349.9M638.4 283.4L625.3 281.0M579.4 311.9L582.8 311.9M798.1 455.8L798.2 442.1M688.3 434.1L655.0 443.3M565.7 302.0L585.3 299.3M412.8 397.4L397.6 394.8M860.3 497.3L806.5 504.6M627.2 292.7L600.7 291.7M456.7 347.1L468.7 343.6M624.7 299.5L602.6 300.8M789.6 538.3L763.0 522.6M860.0 505.0L806.5 504.6M501.5 344.5L468.7 343.6M580.2 303.3L568.8 304.2M411.9 360.9L435.5 363.8M634.6 356.8L644.2 350.2M699.8 372.0L670.5 377.6M529.7 305.2L550.6 303.2M712.8 290.9L695.7 288.7M561.5 298.1L585.3 299.3M615.0 315.9L642.1 317.8M712.6 344.4L710.4 349.3M438.5 460.8L476.2 472.3M607.9 372.3L633.6 369.2M640.0 321.9L663.6 323.6M422.0 335.5L437.0 335.0M670.5 377.6L676.1 369.0M572.0 439.9L543.3 429.9M434.9 442.7L466.6 437.4M755.6 421.5L729.4 410.3M527.1 460.3L476.2 472.3M676.0 279.0L683.5 280.9M605.5 452.6L565.2 455.6M696.9 324.9L679.3 321.2M607.9 372.3L602.8 366.4M538.6 335.7L523.5 330.7M628.0 404.3L661.8 399.6M565.2 455.6L527.1 460.3M522.1 362.1L536.4 366.4M662.9 331.3L635.1 330.2M794.8 381.3L767.6 381.8M375.3 368.6L399.7 373.0M580.6 393.0L604.2 395.9M466.6 437.4L482.5 453.5M570.8 322.5L606.8 322.6M346.0 377.3L375.3 368.6M575.8 292.6L600.7 291.7M569.2 418.0L594.5 423.9M624.7 391.1L652.2 388.0M798.8 388.6L767.6 381.8M662.9 331.3L648.4 334.1M540.6 392.4L517.3 395.7M708.2 300.5L690.6 303.6M768.8 367.4L750.2 370.1M572.0 439.9L621.1 438.5M528.3 325.8L538.8 324.6M721.6 361.3L737.0 356.7M550.3 341.2L536.5 345.6M598.6 330.0L582.8 327.1M515.9 371.3L530.0 379.3M661.8 399.6L675.7 408.2M454.0 320.0L459.7 317.0M550.3 341.2L559.6 336.0M674.9 327.3L691.9 330.0M588.3 334.8L614.8 334.1M635.7 363.6L602.8 366.4M712.8 290.9L712.0 293.1M650.6 495.2L694.4 502.6M698.6 284.8L679.0 286.6M562.3 481.4L611.5 493.6M465.3 314.0L490.1 314.5M676.4 390.5L688.8 397.0M657.0 272.0L670.7 274.3M674.6 302.9L675.9 305.6M562.0 553.7L545.5 557.0M487.9 339.4L515.3 336.1M545.5 557.0L529.1 560.4M740.1 348.3L712.6 344.4M642.0 303.3L615.7 305.0M578.4 550.4L568.5 528.4M731.1 467.1L751.2 450.9M367.2 389.4L352.0 386.8M680.1 313.0L688.0 315.9M675.9 293.1L663.0 291.6M684.3 421.1L726.1 420.6M501.7 377.7L497.1 384.0M614.8 334.1L605.7 339.8M550.3 341.2L570.5 342.7M585.3 299.3L603.6 297.6M404.3 379.8L399.7 373.0M420.7 387.7L390.4 385.6M373.7 359.7L375.3 368.6M610.3 358.8L588.2 352.9M766.9 559.5L736.0 540.7M442.2 383.7L468.6 384.9M575.4 279.2L582.7 282.9M590.0 342.3L570.5 342.7M697.8 318.4L667.5 318.7M492.0 369.1L472.7 365.8M587.2 277.6L596.1 280.0M594.5 423.9L621.1 438.5M703.0 542.4L725.4 518.8M500.7 358.8L509.5 366.1M633.5 310.7L634.6 307.7M543.3 371.8L555.4 363.7M538.8 301.6L529.7 305.2M654.4 370.2L635.7 363.6M515.9 371.3L536.4 366.4M580.6 393.0L540.6 392.4M627.4 345.6L605.7 339.8M683.5 280.9L654.2 281.6M725.7 382.3L686.9 382.0M667.5 318.7L688.0 315.9M839.0 457.0L798.1 455.8M655.6 287.0L655.5 284.5M860.7 489.7L806.5 504.6M525.3 340.3L538.6 335.7M465.0 423.4L458.4 405.2M592.8 346.8L571.0 347.7M557.9 286.6L539.7 286.7M472.3 360.3L470.4 353.7M431.7 420.9L465.0 423.4M797.0 556.5L789.6 538.3M667.5 318.7L663.6 323.6M765.0 464.4L751.2 450.9M572.0 439.9L594.5 423.9M577.9 368.9L570.0 376.1M465.3 314.0L471.0 311.0M430.6 413.6L465.0 423.4M776.7 409.5L729.4 410.3M525.3 340.3L501.5 344.5M372.2 509.2L420.7 517.5M585.3 299.3L587.3 296.0M699.8 372.0L686.9 382.0M729.9 367.6L696.3 364.5M500.7 358.8L505.0 352.5M454.0 320.0L489.2 319.2M611.5 493.6L605.1 470.1M766.9 559.5L751.9 561.0M655.6 287.0L674.1 289.2M380.1 499.7L420.7 517.5M603.6 297.6L630.5 295.3M427.8 465.5L438.5 460.8M388.1 490.2L423.5 496.7M512.6 563.7L496.2 567.0M555.4 363.7L591.6 361.9M349.0 382.0L346.0 377.3M794.3 375.9L767.6 381.8M486.2 348.6L468.7 343.6M577.9 368.9L602.8 366.4M548.7 399.8L540.6 392.4M497.1 384.0L482.8 374.4M629.9 286.2L619.3 289.9M658.7 311.1L652.1 307.0M515.5 475.8L527.1 460.3M668.4 282.7L678.9 284.4M465.0 423.4L502.2 430.5M435.5 363.8L472.7 365.8M596.5 288.7L582.7 286.7M615.2 277.0L613.9 279.2M502.2 295.4L507.4 292.8M794.3 375.9L749.6 376.1M433.8 435.4L466.6 437.4M411.9 360.9L395.8 364.4M776.7 409.5L771.8 398.1M612.1 312.8L601.5 309.7M607.7 281.9L619.2 283.8M477.8 560.8L525.5 530.3M470.4 353.7L505.0 352.5M635.1 330.2L648.4 334.1M551.4 348.8L538.4 355.9M611.3 543.7L568.5 528.4M690.1 291.0L675.9 293.1M652.5 294.6L671.9 296.5M730.2 326.2L712.4 329.4M608.1 352.4L588.2 352.9M649.2 326.9L626.2 324.9M525.5 530.3L540.0 504.4M669.5 307.9L675.9 305.6M515.5 475.8L476.2 472.3M397.6 394.8L390.4 385.6M579.3 312.8L582.8 311.9M425.0 348.0L419.0 344.0M696.9 324.9L691.9 330.0M754.8 360.8L721.6 361.3M563.6 280.8L582.7 282.9M657.0 272.0L668.0 272.0M571.9 288.6L575.8 292.6M709.8 306.1L687.9 309.7M806.5 504.6L763.0 522.6M487.9 330.5L523.5 330.7M607.7 281.9L625.3 281.0M471.0 311.0L478.6 312.4M482.2 517.3L420.7 517.5M716.9 311.6L703.0 314.1M650.6 495.2L631.2 513.8M606.8 322.6L626.2 324.9M570.5 342.7L577.7 338.7M526.4 351.4L518.9 356.7M686.3 335.9L675.7 339.6M676.0 279.0L654.2 281.6M627.7 540.4L674.8 525.5M670.5 377.6L644.3 376.9M551.4 348.8L536.5 345.6M697.8 318.4L703.0 314.1M451.3 369.5L482.8 374.4M823.7 550.5L789.6 538.3M437.0 332.0L437.0 329.0M571.9 288.6L557.9 286.6M572.0 439.9L565.2 455.6M696.9 324.9L712.4 329.4M757.9 388.1L726.4 398.2M437.0 329.0L442.7 326.0M533.6 291.6L557.6 291.3M691.0 282.9L698.6 284.8M749.0 481.1L787.9 488.6M441.1 393.4L468.6 384.9M585.6 510.2L631.2 513.8M696.0 298.9L671.9 296.5M698.6 284.8L706.1 286.8M536.4 305.4L529.7 305.2M817.0 404.6L820.0 411.1M676.4 390.5L686.9 382.0M472.3 360.3L472.7 365.8M611.3 543.7L594.8 547.0M362.2 516.8L420.7 517.5M693.9 482.5L731.1 467.1M418.7 402.8L412.8 397.4M472.7 365.8L509.5 366.1M590.4 307.3L597.1 304.1M605.7 339.8L577.7 338.7M502.2 430.5L466.6 437.4M588.3 334.8L605.7 339.8M615.0 315.9L588.7 318.4M380.1 499.7L423.5 496.7M814.0 398.0L771.8 398.1M551.4 348.8L570.5 342.7M489.2 319.2L490.1 314.5M543.3 429.9L594.5 423.9M615.0 315.9L613.2 319.3M628.0 404.3L597.9 413.5M782.0 558.0L789.6 538.3M503.3 403.7L517.3 395.7M413.0 340.0L422.0 335.5M633.5 310.7L658.7 311.1M522.1 362.1L555.4 363.7M411.9 360.9L416.5 367.4M684.3 421.1L675.7 408.2M436.0 450.0L466.6 437.4M638.4 283.4L654.2 281.6M661.8 399.6L676.4 390.5M561.5 298.1L538.8 301.6M652.5 294.6L643.8 297.8M459.7 317.0L489.2 319.2M690.6 303.6L696.0 298.9M528.3 325.8L523.5 330.7M470.4 353.7L500.7 358.8M755.6 421.5L794.0 419.0M635.1 330.2L614.8 334.1M693.9 482.5L745.1 500.1M554.5 383.3L521.0 388.0M623.0 379.3L608.9 385.3M486.8 322.5L463.1 325.5M673.3 276.7L650.5 275.6M575.8 292.6L557.6 291.3M438.5 460.8L482.5 453.5M482.2 517.3L498.9 497.7M696.0 298.9L674.6 302.9M590.0 342.3L592.8 346.8M442.7 326.0L448.3 323.0M553.0 295.3L542.7 298.3M669.5 307.9L658.7 311.1M448.3 323.0L454.0 320.0M432.8 428.2L466.6 437.4M581.3 381.8L580.6 393.0M565.5 352.5L571.0 347.7M713.2 391.8L688.8 397.0M538.6 335.7L548.4 330.7M456.8 340.2L474.7 336.1M459.7 317.0L490.1 314.5M538.6 335.7L550.3 341.2M628.0 404.3L590.6 403.1M655.6 287.0L629.9 286.2M578.4 550.4L562.0 553.7M629.9 286.2L655.5 284.5M371.8 379.9L399.7 373.0M711.5 334.6L691.9 330.0M699.8 372.0L720.0 376.2M673.8 555.2L670.0 537.6M495.0 334.3L487.9 330.5M684.3 421.1L720.9 433.6M397.6 394.8L382.4 392.1M676.4 390.5L652.2 388.0M456.8 340.2L462.6 332.8M642.0 303.3L661.4 304.8M444.3 359.1L472.7 365.8M853.7 473.7L811.5 471.4M382.4 392.1L390.4 385.6M450.8 484.1L498.9 497.7M597.9 413.5L630.2 426.1M481.4 305.8L486.6 303.2M611.3 543.7L585.6 510.2M690.6 303.6L675.9 305.6M655.5 284.5L678.9 284.4M779.2 356.6L750.4 352.2M839.0 457.0L846.3 465.3M587.3 296.0L575.8 292.6M627.4 345.6L608.1 352.4M729.4 410.3L726.4 398.2M403.0 354.7L411.9 360.9M580.6 393.0L608.9 385.3M724.1 317.1L697.8 318.4M477.8 560.8L459.4 554.6M720.5 314.3L703.0 314.1M729.9 367.6L750.2 370.1M543.3 371.8L570.0 376.1M459.4 554.6L441.4 551.8M627.4 345.6L634.3 339.4M343.0 372.5L340.0 367.8M607.5 326.9L635.1 330.2M530.4 446.1L543.3 429.9M806.5 504.6L787.9 488.6M470.4 353.7L456.7 347.1M450.8 484.1L423.5 496.7M399.7 373.0L395.8 364.4M524.2 295.9L542.7 298.3M562.3 481.4L605.1 470.1M605.5 452.6L647.0 469.0M572.0 295.2L553.0 295.3M577.9 358.0L565.5 352.5M680.1 313.0L687.9 309.7M810.4 553.5L789.6 538.3M538.8 301.6L514.1 302.7M597.9 413.5L632.4 413.1M691.0 282.9L678.9 284.4M424.7 408.2L458.4 405.2M649.5 290.4L629.9 286.2M596.5 288.7L619.3 289.9M456.8 340.2L456.7 347.1M442.7 326.0L463.1 325.5M607.3 294.4L575.8 292.6M487.9 391.0L469.7 395.7M615.7 305.0L597.1 304.1M482.5 453.5L527.1 460.3M525.3 340.3L550.3 341.2M501.5 344.5L487.9 339.4M561.5 298.1L542.7 298.3M674.9 327.3L663.6 323.6M572.0 295.2L587.3 296.0M688.3 434.1L674.2 458.9M826.0 424.3L794.0 419.0M817.0 404.6L771.8 398.1M627.2 292.7L619.3 289.9M375.3 368.6L395.8 364.4M663.3 363.4L677.5 357.6M766.9 559.5L789.6 538.3M598.6 330.0L607.5 326.9M725.7 382.3L767.6 381.8M711.1 295.4L689.2 295.3M679.0 286.6L678.9 284.4M726.4 398.2L688.8 397.0M580.2 303.3L585.3 299.3M754.8 360.8L737.0 356.7M670.5 377.6L654.4 370.2M502.2 295.4L524.2 295.9M652.5 294.6L649.5 290.4M491.8 300.6L497.0 298.0M598.6 330.0L575.3 332.3M605.5 452.6L572.0 439.9M634.6 307.7L652.1 307.0M559.6 336.0L548.4 330.7M605.0 285.4L596.5 288.7M571.0 347.7L588.2 352.9M676.0 279.0L649.2 278.8M497.0 298.0L502.2 295.4M525.5 530.3L458.3 532.4M482.5 453.5L476.2 472.3M662.9 331.3L655.3 337.7M623.0 379.3L607.9 372.3M628.7 278.8L613.9 279.2M502.2 430.5L482.5 453.5M558.7 326.9L582.8 327.1M749.6 376.1L768.8 367.4M649.2 278.8L625.3 281.0M432.8 428.2L431.7 420.9M373.7 359.7L395.8 364.4M697.8 318.4L688.0 315.9M644.3 376.9L633.6 369.2M423.4 549.0L405.4 546.1M658.7 311.1L687.9 309.7M612.1 312.8L615.9 308.0M501.3 305.4L506.6 308.3M652.5 294.6L630.5 295.3M605.0 285.4L582.7 286.7M665.0 353.1L644.2 350.2M705.6 321.2L679.3 321.2M468.6 384.9L482.8 374.4M699.4 339.4L686.3 335.9M514.1 302.7L508.1 299.8M839.0 457.0L811.5 471.4M642.0 303.3L652.1 307.0M703.9 404.7L688.8 397.0M776.7 409.5L746.7 402.6M436.0 450.0L482.5 453.5M675.7 408.2L632.4 413.1M525.5 530.3L482.2 517.3M647.0 469.0L650.6 495.2M349.0 382.0L371.8 379.9M523.5 330.7L515.3 336.1M706.1 286.8L695.7 288.7M726.1 420.6L701.2 413.6M540.0 504.4L585.6 510.2M486.8 322.5L481.0 326.1M558.7 326.9L548.4 330.7M442.7 326.0L456.5 329.0M680.1 313.0L650.6 314.3M607.9 372.3L570.0 376.1M512.6 563.7L477.8 560.8M392.0 358.0L411.9 360.9M372.2 509.2L380.1 499.7M649.5 290.4L619.3 289.9M495.0 334.3L523.5 330.7M659.2 552.5L670.0 537.6M688.3 434.1L720.9 433.6M577.9 368.9L607.9 372.3M663.3 363.4L635.7 363.6M498.9 497.7L476.2 472.3M510.2 308.3L506.6 308.3M517.8 287.6L544.2 289.1M399.7 373.0L416.5 367.4M750.4 352.2L737.0 356.7M567.2 283.9L557.9 286.6M644.6 549.7L670.0 537.6M661.4 304.8L675.9 305.6M587.3 296.0L603.6 297.6M861.0 482.0L811.5 471.4M596.5 288.7L575.8 292.6M634.6 356.8L610.3 358.8M624.7 299.5L603.6 297.6M486.8 322.5L489.2 319.2M497.6 327.4L487.9 330.5M835.0 444.0L798.2 442.1M411.9 360.9L444.3 359.1M548.7 399.8L539.1 411.5M562.3 481.4L565.2 455.6M757.9 388.1L713.2 391.8M644.2 350.2L608.1 352.4M500.7 358.8L518.9 356.7M674.2 458.9L693.9 482.5M588.7 318.4L569.2 316.8M497.6 327.4L481.0 326.1M702.4 355.4L696.3 364.5M667.5 318.7L650.6 314.3M757.9 388.1L771.8 398.1M580.2 303.3L597.1 304.1M713.2 391.8L686.9 382.0M806.4 393.3L814.0 398.0M749.0 481.1L693.9 482.5M642.1 317.8L650.6 314.3M644.6 549.7L627.7 540.4M765.0 464.4L749.0 481.1M476.2 308.4L506.6 308.3M793.1 430.0L798.2 442.1M663.2 342.7L627.4 345.6M430.6 413.6L424.7 408.2M462.7 376.7L451.3 369.5M423.4 549.0L420.7 517.5M673.8 555.2L703.0 542.4M462.6 332.8L474.7 336.1M715.6 452.9L731.1 467.1M690.1 291.0L674.1 289.2M518.2 418.2L503.3 403.7M607.3 294.4L603.6 297.6M690.6 349.9L683.7 345.7M506.6 308.3L529.7 305.2M702.4 355.4L724.4 352.5M427.5 374.0L399.7 373.0M538.8 301.6L542.7 298.3M658.7 311.1L650.6 314.3M459.7 317.0L465.3 314.0M698.6 284.8L678.9 284.4M554.5 383.3L530.0 379.3M418.7 402.8L458.4 405.2M668.7 299.3L648.7 301.1M448.3 323.0L463.1 325.5M696.0 298.9L689.2 295.3M739.3 336.3L722.0 340.8M454.0 320.0L486.8 322.5M798.8 388.6L757.9 388.1M419.0 344.0L433.3 341.3M661.8 399.6L624.7 391.1M623.0 379.3L652.2 388.0M427.5 374.0L416.5 367.4M387.4 543.3L420.7 517.5M615.0 315.9L591.5 314.4M472.3 360.3L500.7 358.8M529.1 560.4L512.6 563.7M505.0 352.5L518.9 356.7M776.7 409.5L755.6 421.5M510.5 324.5L514.0 320.5M416.5 367.4L395.8 364.4M352.0 386.8L349.0 382.0M619.2 283.8L629.9 286.2M525.3 340.3L487.9 339.4M725.4 518.8L694.4 502.6M675.7 408.2L688.8 397.0M470.4 353.7L486.2 348.6M530.4 446.1L502.2 430.5M477.8 560.8L458.3 532.4M544.2 289.1L533.6 291.6M605.0 285.4L619.2 283.8M528.3 325.8L558.7 326.9M619.2 283.8L625.3 281.0M745.1 500.1L694.4 502.6M662.9 331.3L674.9 327.3M367.2 389.4L371.8 379.9M670.5 377.6L686.9 382.0M663.2 342.7L655.3 337.7M528.3 325.8L548.4 330.7M422.0 335.5L433.3 341.3M538.8 301.6L565.7 302.0M806.5 504.6L745.1 500.1M683.7 345.7L710.4 349.3M437.0 332.0L456.5 329.0M530.4 446.1L565.2 455.6M590.4 307.3L579.2 307.5M605.0 285.4L629.9 286.2M538.8 301.6L508.1 299.8M392.0 358.0L395.8 364.4M630.2 426.1L658.6 427.8M562.0 553.7L525.5 530.3M462.7 376.7L482.8 374.4M628.0 404.3L604.2 395.9M530.0 379.3L497.1 384.0M522.1 362.1L500.7 358.8M423.4 549.0L458.3 532.4M749.6 376.1L750.2 370.1M846.3 465.3L811.5 471.4M492.0 369.1L482.8 374.4M608.9 385.3L604.2 395.9M740.1 348.3L750.4 352.2M710.3 297.6L696.0 298.9M581.3 381.8L570.0 376.1M642.0 303.3L625.8 302.8M346.0 377.3L371.8 379.9M471.0 311.0L476.2 308.4M829.0 430.9L798.2 442.1M491.8 300.6L514.1 302.7M679.0 286.6L695.7 288.7M713.6 288.7L695.7 288.7M575.3 332.3L548.4 330.7M476.2 308.4L481.4 305.8M793.1 430.0L755.6 421.5M551.4 348.8L565.5 352.5M427.8 465.5L476.2 472.3M674.6 302.9L661.4 304.8M665.0 353.1L677.5 357.6M644.2 350.2L683.7 345.7M722.0 340.8L699.4 339.4M472.7 365.8L482.8 374.4M487.9 339.4L495.0 334.3M565.4 316.5L570.8 322.5M590.4 307.3L615.7 305.0M512.6 563.7L525.5 530.3M496.2 567.0L477.8 560.8M612.1 312.8L582.8 311.9M787.9 488.6L811.5 471.4M598.6 330.0L635.1 330.2M569.1 316.2L591.5 314.4M860.7 489.7L787.9 488.6M346.0 377.3L343.0 372.5M456.8 340.2L433.3 341.3M596.1 280.0L613.9 279.2M630.2 426.1L632.4 413.1M451.3 369.5L435.5 363.8M860.7 489.7L811.5 471.4M420.7 387.7L441.1 393.4M497.6 327.4L523.5 330.7M837.0 450.5L798.2 442.1M569.2 418.0L597.9 413.5M608.1 352.4L592.8 346.8M337.0 363.0L340.0 367.8M626.2 324.9L613.2 319.3M691.9 330.0L686.3 335.9M518.2 418.2L502.2 430.5M571.9 288.6L544.2 289.1M387.4 543.3L370.8 540.0M722.0 340.8L712.6 344.4M611.5 493.6L631.2 513.8M674.8 525.5L703.0 542.4M627.2 292.7L652.5 294.6M826.0 424.3L793.1 430.0M487.9 330.5L474.7 336.1M582.7 282.9L582.7 286.7M703.0 542.4L736.0 540.7M405.4 546.1L420.7 517.5M669.5 307.9L687.9 309.7M460.7 501.3L498.9 497.7M577.9 368.9L543.3 371.8M482.2 517.3L460.7 501.3M699.4 339.4L675.7 339.6M458.4 405.2L469.7 395.7M628.7 278.8L625.3 281.0M605.0 285.4L619.3 289.9M634.6 356.8L663.3 363.4M472.3 360.3L444.3 359.1M355.3 361.3L375.3 368.6M649.5 290.4L674.1 289.2M563.6 280.8L567.2 283.9M850.3 536.7L789.6 538.3M526.4 351.4L551.4 348.8M729.9 367.6L721.6 361.3M627.4 345.6L590.0 342.3M625.8 302.8L648.7 301.1M486.6 303.2L491.8 300.6M663.2 342.7L675.7 339.6M690.6 349.9L677.5 357.6M503.3 403.7L469.7 395.7M752.1 437.9L751.2 450.9M674.9 327.3L696.9 324.9M413.0 340.0L433.3 341.3M597.9 413.5L594.5 423.9M754.8 360.8L768.8 367.4M689.2 295.3L675.9 293.1M577.9 358.0L591.6 361.9M572.0 295.2L575.8 292.6M628.0 274.0L615.2 277.0M406.3 475.0L450.8 484.1M387.4 543.3L362.2 516.8M569.2 418.0L590.6 403.1M709.8 306.1L675.9 305.6M607.7 281.9L596.1 280.0M668.7 299.3L696.0 298.9M837.0 450.5L798.1 455.8M442.2 383.7L427.5 374.0M450.8 484.1L460.7 501.3M654.4 370.2L644.3 376.9M458.4 405.2L483.1 410.8M728.2 323.2L705.6 321.2M417.0 470.3L450.8 484.1M649.2 278.8L628.7 278.8M798.8 388.6L771.8 398.1M459.4 554.6L458.3 532.4M696.3 364.5L677.5 357.6M628.0 274.0L650.5 275.6M536.4 366.4L509.5 366.1M492.0 369.1L509.5 366.1M432.8 428.2L465.0 423.4M441.4 551.8L458.3 532.4M352.0 386.8L371.8 379.9M517.8 287.6L523.0 285.0M503.3 403.7L483.1 410.8M690.6 303.6L674.6 302.9M702.4 355.4L690.6 349.9M523.0 285.0L540.0 284.0M721.6 361.3L696.3 364.5M588.7 318.4L613.2 319.3M486.6 303.2L514.1 302.7M517.5 320.6L514.0 320.5M649.2 278.8L654.2 281.6M437.0 329.0L456.5 329.0M857.5 512.5L855.0 520.0M855.0 520.0L852.7 528.3M354.2 536.6L352.3 524.3M614.8 334.1L648.4 334.1M545.5 557.0L525.5 530.3M598.6 330.0L588.3 334.8M434.6 354.3L470.4 353.7M352.3 524.3L362.2 516.8M649.2 326.9L635.1 330.2M736.0 540.7L789.6 538.3M683.5 280.9L668.4 282.7M745.1 500.1L725.4 518.8M605.0 285.4L607.7 281.9M627.2 292.7L607.3 294.4M669.5 307.9L661.4 304.8M602.6 300.8L625.8 302.8M590.6 403.1L604.2 395.9M598.6 330.0L614.8 334.1M502.2 295.4L514.3 297.7M412.8 397.4L441.1 393.4M713.2 391.8L726.4 398.2M708.2 300.5L696.0 298.9M674.8 525.5L694.4 502.6M690.6 349.9L710.4 349.3M588.7 318.4L606.8 322.6M726.1 420.6L729.4 410.3M623.0 379.3L624.7 391.1M729.9 367.6L720.0 376.2M699.4 339.4L712.6 344.4M640.0 321.9L626.2 324.9M832.0 437.4L798.2 442.1M568.5 528.4L585.6 510.2M608.1 352.4L610.3 358.8M590.4 307.3L601.5 309.7M663.2 342.7L634.3 339.4M820.0 411.1L776.7 409.5M590.4 307.3L580.2 303.3M647.0 469.0L611.5 493.6M655.6 287.0L679.0 286.6M543.3 371.8L530.0 379.3M528.3 325.8L497.6 327.4M406.3 475.0L417.0 470.3M553.0 295.3L533.6 291.6M522.1 362.1L538.4 355.9M724.4 352.5L750.4 352.2M725.7 382.3L720.0 376.2M670.0 537.6L703.0 542.4M793.7 370.4L768.8 367.4M615.2 277.0L650.5 275.6M465.0 423.4L466.6 437.4M501.7 377.7L482.8 374.4M489.4 310.5L506.6 308.3M371.8 379.9L404.3 379.8M442.2 383.7L441.1 393.4M757.9 388.1L746.7 402.6M580.6 393.0L554.5 383.3M471.0 311.0L489.4 310.5M551.4 348.8L571.0 347.7M592.8 346.8L588.2 352.9M628.0 404.3L632.4 413.1M540.0 284.0L551.8 282.4M551.8 282.4L563.6 280.8M662.9 331.3L686.3 335.9M765.2 348.1L750.4 352.2M674.6 302.9L648.7 301.1M587.2 277.6L613.9 279.2M627.7 540.4L631.2 513.8M674.2 458.9L655.0 443.3M755.6 421.5L752.1 437.9M521.0 388.0L530.0 379.3M697.8 318.4L705.6 321.2M850.3 536.7L848.0 545.0M829.0 430.9L793.1 430.0M524.2 295.9L514.3 297.7M382.4 392.1L367.2 389.4M491.8 300.6L508.1 299.8M746.7 402.6L771.8 398.1M711.5 334.6L686.3 335.9M434.6 354.3L444.3 359.1M543.3 371.8L536.4 366.4M582.7 282.9L596.1 280.0M615.7 305.0L625.8 302.8M724.1 317.1L705.6 321.2M570.8 322.5L552.8 323.0M487.9 391.0L468.6 384.9M412.8 397.4L420.7 387.7M712.8 558.5L736.0 540.7M581.3 381.8L608.9 385.3M652.5 294.6L663.0 291.6M526.4 351.4L505.0 352.5M726.1 320.2L705.6 321.2M703.9 404.7L701.2 413.6M650.6 495.2L611.5 493.6M404.3 379.8L390.4 385.6M403.0 354.7L414.0 351.3M571.9 288.6L596.5 288.7M524.2 295.9L533.6 291.6M628.0 274.0L642.5 273.0M580.2 303.3L574.5 306.1M680.1 313.0L703.0 314.1M640.0 321.9L649.2 326.9M558.7 326.9L570.8 322.5M655.3 337.7L648.4 334.1M655.0 443.3L658.6 427.8M577.9 358.0L610.3 358.8M565.7 302.0L550.6 303.2M674.9 327.3L679.3 321.2M555.4 363.7L538.4 355.9M525.5 530.3L568.5 528.4M540.0 504.4L498.9 497.7M571.9 288.6L582.7 286.7M438.5 460.8L436.0 450.0M370.8 540.0L352.3 524.3M699.4 339.4L683.7 345.7M624.7 299.5L643.8 297.8M515.5 475.8L498.9 497.7M820.0 411.1L794.0 419.0M427.8 465.5L450.8 484.1M754.8 360.8L750.2 370.1M434.6 354.3L411.9 360.9M643.8 297.8L671.9 296.5M640.0 321.9L613.2 319.3M806.4 393.3L771.8 398.1M630.2 426.1L621.1 438.5M669.5 307.9L652.1 307.0M642.5 273.0L650.5 275.6M540.0 284.0L567.2 283.9M418.7 402.8L441.1 393.4M501.7 377.7L515.9 371.3M634.6 356.8L608.1 352.4M416.5 367.4L435.5 363.8M740.1 348.3L710.4 349.3M663.2 342.7L683.7 345.7M442.2 383.7L420.7 387.7M420.7 517.5L458.3 532.4M798.1 455.8L811.5 471.4M776.7 409.5L794.0 419.0M503.3 403.7L539.1 411.5M462.7 376.7L468.6 384.9M675.9 293.1L671.9 296.5M663.3 363.4L676.1 369.0M628.0 404.3L675.7 408.2M529.1 560.4L525.5 530.3M489.2 319.2L509.1 318.6M343.0 372.5L375.3 368.6M703.9 404.7L726.4 398.2M691.0 282.9L668.4 282.7M502.2 430.5L543.3 429.9M644.3 376.9L652.2 388.0M706.2 303.3L690.6 303.6M765.0 464.4L798.1 455.8M670.7 274.3L650.5 275.6M649.2 326.9L663.6 323.6M632.4 413.1L658.6 427.8M577.9 358.0L555.4 363.7M425.0 348.0L456.7 347.1M696.9 324.9L705.6 321.2M642.1 317.8L640.0 321.9M507.4 292.8L524.2 295.9M451.3 369.5L416.5 367.4M481.4 305.8L501.3 305.4M674.8 525.5L631.2 513.8M562.3 481.4L540.0 504.4M647.0 469.0L655.0 443.3M619.3 289.9L600.7 291.7M607.5 326.9L606.8 322.6M463.1 325.5L456.5 329.0M487.9 339.4L468.7 343.6M487.9 391.0L521.0 388.0M703.9 404.7L675.7 408.2M442.2 383.7L404.3 379.8M752.1 437.9L798.2 442.1M405.4 546.1L387.4 543.3M562.0 553.7L568.5 528.4M722.0 340.8L711.5 334.6M686.9 382.0L720.0 376.2M725.7 382.3L757.9 388.1M561.5 298.1L565.7 302.0M670.0 537.6L674.8 525.5M522.1 362.1L509.5 366.1M434.9 442.7L433.8 435.4M501.7 377.7L530.0 379.3M675.7 408.2L701.2 413.6M765.0 464.4L731.1 467.1M794.3 375.9L768.8 367.4M521.0 388.0L497.1 384.0M688.0 315.9L703.0 314.1M752.1 437.9L720.9 433.6M495.0 334.3L474.7 336.1M793.1 430.0L794.0 419.0M514.1 302.7L529.7 305.2M751.9 561.0L736.0 540.7M702.4 355.4L710.4 349.3M528.3 325.8L510.5 324.5M630.2 426.1L594.5 423.9M852.7 528.3L789.6 538.3M476.2 308.4L489.4 310.5M627.4 345.6L644.2 350.2M562.3 481.4L527.1 460.3M772.2 352.3L750.4 352.2M633.5 310.7L615.0 315.9M615.9 308.0L634.6 307.7M668.4 282.7L655.5 284.5M611.3 543.7L631.2 513.8M779.2 356.6L754.8 360.8M582.7 282.9L567.2 283.9M581.3 381.8L607.9 372.3M497.0 298.0L508.1 299.8M544.2 289.1L539.7 286.7M501.3 305.4L529.7 305.2M712.8 558.5L703.0 542.4M538.8 301.6L514.3 297.7M642.1 317.8L613.2 319.3M625.3 281.0L613.9 279.2M690.1 291.0L663.0 291.6M793.1 430.0L752.1 437.9M654.4 370.2L676.1 369.0M553.0 295.3L575.8 292.6M507.4 292.8L512.6 290.2M610.3 358.8L591.6 361.9M430.6 413.6L458.4 405.2M512.6 290.2L517.8 287.6M530.4 446.1L572.0 439.9M427.5 374.0L404.3 379.8M749.6 376.1L720.0 376.2M615.7 305.0L602.6 300.8M860.0 505.0L857.5 512.5M668.4 282.7L654.2 281.6M565.5 352.5L588.2 352.9M370.8 540.0L354.2 536.6M538.8 301.6L550.6 303.2M588.7 318.4L570.8 322.5M515.9 371.3L509.5 366.1M680.1 313.0L658.7 311.1M855.0 520.0L806.5 504.6M642.0 303.3L648.7 301.1M823.0 417.7L794.0 419.0M610.3 358.8L602.8 366.4M544.2 289.1L557.6 291.3M588.7 318.4L591.5 314.4M674.1 289.2L663.0 291.6M463.1 325.5L481.0 326.1M652.5 294.6L675.9 293.1M551.8 282.4L567.2 283.9M654.4 370.2L663.3 363.4M713.2 391.8L676.4 390.5M662.9 331.3L649.2 326.9M337.0 363.0L355.3 361.3M624.7 299.5L630.5 295.3M501.5 344.5L526.4 351.4M663.6 323.6L679.3 321.2M590.0 342.3L605.7 339.8M575.4 279.2L587.2 277.6M501.7 377.7L492.0 369.1M699.4 339.4L711.5 334.6M635.7 363.6L633.6 369.2M503.3 403.7L458.4 405.2M550.3 341.2L551.4 348.8M587.2 277.6L599.0 276.0M746.7 402.6L726.4 398.2M817.0 404.6L776.7 409.5M752.1 437.9L715.6 452.9M482.2 517.3L540.0 504.4M565.7 302.0L561.7 302.9M823.7 550.5L810.4 553.5M699.8 372.0L676.1 369.0M611.5 493.6L585.6 510.2M590.4 307.3L615.9 308.0M810.4 553.5L797.0 556.5M388.1 490.2L396.0 480.7M625.3 281.0L654.2 281.6M340.0 367.8L375.3 368.6M585.3 299.3L602.6 300.8M594.8 547.0L568.5 528.4M396.0 480.7L406.3 475.0M530.4 446.1L527.1 460.3M661.8 399.6L688.8 397.0M530.0 379.3L570.0 376.1M628.7 278.8L615.2 277.0M687.9 309.7L703.0 314.1M684.3 421.1L688.3 434.1M732.2 329.3L712.4 329.4M487.9 330.5L481.0 326.1M667.5 318.7L679.3 321.2M724.4 352.5L710.4 349.3M602.8 366.4L591.6 361.9M607.3 294.4L630.5 295.3M729.8 332.5L712.4 329.4M688.3 434.1L715.6 452.9M557.9 286.6L582.7 286.7M702.4 355.4L721.6 361.3M628.7 278.8L650.5 275.6M612.1 312.8L591.5 314.4M602.8 366.4L633.6 369.2M722.0 340.8L740.1 348.3M554.5 383.3L540.6 392.4M713.4 308.8L687.9 309.7M570.5 342.7L592.8 346.8M587.3 296.0L607.3 294.4M523.5 330.7L548.4 330.7M623.0 379.3L633.6 369.2M699.8 372.0L729.9 367.6M442.2 383.7L462.7 376.7M635.1 330.2L626.2 324.9M755.6 421.5L726.1 420.6M668.7 299.3L671.9 296.5M555.4 363.7L536.4 366.4M521.0 388.0L517.3 395.7M371.8 379.9L390.4 385.6M712.8 290.9L690.1 291.0M512.6 290.2L544.2 289.1M687.9 309.7L675.9 305.6M647.0 469.0L605.1 470.1M725.7 382.3L713.2 391.8M726.1 420.6L720.9 433.6M732.3 559.8L736.0 540.7M528.3 325.8L514.0 320.5M623.0 379.3L644.3 376.9M647.0 469.0L693.9 482.5M540.0 284.0L539.7 286.7M501.5 344.5L536.5 345.6M373.7 359.7L392.0 358.0M789.6 538.3L806.5 504.6M729.8 332.5L711.5 334.6M486.8 322.5L497.6 327.4M515.5 475.8L540.0 504.4M392.0 358.0L403.0 354.7M599.0 276.0L613.5 275.0M613.5 275.0L628.0 274.0M567.2 283.9L582.7 286.7M554.5 383.3L570.0 376.1M786.2 360.8L754.8 360.8M640.0 321.9L667.5 318.7M577.9 368.9L591.6 361.9M797.0 556.5L782.0 558.0M580.2 303.3L602.6 300.8M749.6 376.1L767.6 381.8M782.0 558.0L766.9 559.5M582.8 327.1L575.3 332.3M526.4 351.4L538.4 355.9M633.5 310.7L612.1 312.8M417.0 470.3L427.8 465.5M690.1 291.0L689.2 295.3M601.5 309.7L582.8 311.9M655.0 443.3L621.1 438.5M588.3 334.8L577.7 338.7M703.9 404.7L729.4 410.3M605.7 339.8L634.3 339.4M643.8 297.8L630.5 295.3M693.3 556.9L703.0 542.4M724.4 352.5L740.1 348.3M728.2 323.2L696.9 324.9M684.3 421.1L658.6 427.8M591.5 314.4L582.8 311.9M407.0 336.0L422.0 335.5M456.7 347.1L486.2 348.6M655.3 337.7L686.3 335.9M456.5 329.0L481.0 326.1M673.3 276.7L676.0 279.0M670.5 377.6L652.2 388.0M355.3 361.3L340.0 367.8M450.8 484.1L476.2 472.3M501.5 344.5L486.2 348.6M649.5 290.4L663.0 291.6M495.0 334.3L515.3 336.1M437.0 335.0L462.6 332.8M673.8 555.2L659.2 552.5M425.0 348.0L433.3 341.3M543.3 429.9L539.1 411.5M427.5 374.0L462.7 376.7M627.2 292.7L649.5 290.4M850.3 536.7L823.7 550.5M489.2 319.2L514.0 320.5M406.3 475.0L423.5 496.7M765.2 348.1L740.1 348.3M668.7 299.3L674.6 302.9M659.2 552.5L644.6 549.7M599.0 276.0L615.2 277.0M655.6 287.0L649.5 290.4M852.7 528.3L806.5 504.6M431.7 420.9L430.6 413.6M683.7 345.7L675.7 339.6M650.6 495.2L693.9 482.5M634.6 356.8L677.5 357.6M565.5 352.5L538.4 355.9M635.7 363.6L610.3 358.8M661.4 304.8L652.1 307.0M492.0 369.1L515.9 371.3M538.6 335.7L515.3 336.1M526.4 351.4L536.5 345.6M590.6 403.1L539.1 411.5M699.8 372.0L696.3 364.5M684.3 421.1L701.2 413.6M606.8 322.6L582.8 327.1M627.2 292.7L630.5 295.3M715.6 452.9L751.2 450.9M684.3 421.1L632.4 413.1M654.4 370.2L633.6 369.2M460.7 501.3L423.5 496.7M691.9 330.0L712.4 329.4M414.0 351.3L425.0 348.0M615.0 315.9L612.1 312.8M668.7 299.3L643.8 297.8M680.1 313.0L667.5 318.7M451.3 369.5L472.7 365.8M642.0 303.3L634.6 307.7M559.6 336.0L577.7 338.7M456.7 347.1L433.3 341.3M403.0 354.7L434.6 354.3M538.6 335.7L559.6 336.0M605.5 452.6L655.0 443.3M696.3 364.5L676.1 369.0M441.4 551.8L423.4 549.0M693.9 482.5L694.4 502.6M588.3 334.8L575.3 332.3M543.3 371.8L515.9 371.3M414.0 351.3L434.6 354.3M370.8 540.0L362.2 516.8M655.5 284.5L654.2 281.6M468.6 384.9L497.1 384.0M624.7 299.5L648.7 301.1M503.3 403.7L548.7 399.8M524.2 295.9L553.0 295.3M503.3 403.7L487.9 391.0M367.2 389.4L390.4 385.6M633.5 310.7L650.6 314.3M517.8 287.6L539.7 286.7M518.2 418.2L465.0 423.4M437.0 335.0L437.0 332.0M716.9 311.6L687.9 309.7M683.5 280.9L691.0 282.9M638.4 283.4L655.5 284.5M798.1 455.8L751.2 450.9M679.0 286.6L655.5 284.5M580.6 393.0L590.6 403.1M553.0 295.3L557.6 291.3M642.1 317.8L667.5 318.7M724.1 317.1L703.0 314.1M590.4 307.3L582.8 311.9M852.7 528.3L850.3 536.7M696.3 364.5L663.3 363.4M674.8 525.5L650.6 495.2M634.6 356.8L635.7 363.6M725.4 518.8L763.0 522.6M362.2 516.8L372.2 509.2M561.5 298.1L553.0 295.3M627.7 540.4L611.3 543.7M798.2 442.1L751.2 450.9M712.0 293.1L690.1 291.0M424.7 408.2L418.7 402.8M674.9 327.3L649.2 326.9M588.3 334.8L559.6 336.0M661.4 304.8L648.7 301.1M765.0 464.4L787.9 488.6M683.7 345.7L712.6 344.4M525.3 340.3L515.3 336.1M745.1 500.1L763.0 522.6M501.5 344.5L505.0 352.5M607.5 326.9L582.8 327.1M765.0 464.4L811.5 471.4M605.0 285.4L582.7 282.9M739.3 336.3L711.5 334.6M679.0 286.6L674.1 289.2M420.7 387.7L404.3 379.8M577.9 358.0L588.2 352.9M706.1 286.8L679.0 286.6M434.6 354.3L456.7 347.1M444.3 359.1L435.5 363.8M559.6 336.0L575.3 332.3M525.3 340.3L536.5 345.6M561.5 298.1L587.3 296.0M427.5 374.0L451.3 369.5M420.7 517.5L460.7 501.3M507.4 292.8L533.6 291.6M746.7 402.6L729.4 410.3M748.7 340.1L740.1 348.3M615.0 315.9L650.6 314.3M441.1 393.4L469.7 395.7M581.3 381.8L554.5 383.3M486.8 322.5L510.5 324.5M396.0 480.7L423.5 496.7M607.5 326.9L626.2 324.9M548.7 399.8L590.6 403.1M562.3 481.4L585.6 510.2M482.2 517.3L458.3 532.4M730.2 326.2L696.9 324.9M688.3 434.1L658.6 427.8M465.0 423.4L483.1 410.8M702.4 355.4L737.0 356.7M508.1 299.8L514.3 297.7M754.8 360.8L750.4 352.2M710.3 297.6L689.2 295.3M729.4 410.3L701.2 413.6M624.7 299.5L625.8 302.8M468.6 384.9L469.7 395.7M544.2 289.1L557.9 286.6M605.5 452.6L621.1 438.5M487.9 391.0L497.1 384.0M757.9 388.1L767.6 381.8M563.6 280.8L575.4 279.2M736.0 540.7L725.4 518.8M518.2 418.2L483.1 410.8M437.0 332.0L462.6 332.8M462.6 332.8L456.5 329.0M686.9 382.0L652.2 388.0M602.6 300.8L597.1 304.1M662.9 331.3L691.9 330.0M848.0 545.0L823.7 550.5M558.7 326.9L575.3 332.3M456.8 340.2L487.9 339.4M615.9 308.0L615.7 305.0M649.2 278.8L650.5 275.6M606.8 322.6L613.2 319.3M643.8 297.8L648.7 301.1M613.5 275.0L615.2 277.0M380.1 499.7L388.1 490.2M497.6 327.4L510.5 324.5M633.5 310.7L652.1 307.0M736.0 540.7L763.0 522.6M661.8 399.6L652.2 388.0M577.9 368.9L555.4 363.7M397.6 394.8L420.7 387.7M487.9 339.4L474.7 336.1M614.8 334.1L634.3 339.4M642.5 273.0L657.0 272.0M633.5 310.7L615.9 308.0M627.4 345.6L592.8 346.8M689.2 295.3L671.9 296.5M751.9 561.0L732.3 559.8M607.3 294.4L600.7 291.7M570.8 322.5L582.8 327.1M531.7 324.2L528.3 325.8M755.6 421.5L720.9 433.6M371.8 379.9L375.3 368.6M732.3 559.8L712.8 558.5M570.8 322.5L559.7 320.2M857.5 512.5L806.5 504.6M647.0 469.0L674.2 458.9M436.0 450.0L434.9 442.7M580.2 303.3L565.7 302.0M522.1 362.1L518.9 356.7M521.0 388.0L540.6 392.4M425.0 348.0L434.6 354.3M458.4 405.2L441.1 393.4M711.5 334.6L712.4 329.4M690.1 291.0L695.7 288.7M627.7 540.4L670.0 537.6M548.7 399.8L517.3 395.7M663.2 342.7L644.2 350.2M497.0 298.0L514.3 297.7M657.0 272.0L650.5 275.6M523.0 285.0L539.7 286.7M605.5 452.6L605.1 470.1M655.3 337.7L675.7 339.6M548.7 399.8L580.6 393.0M702.4 355.4L677.5 357.6M634.3 339.4L648.4 334.1M720.0 376.2L750.2 370.1M355.3 361.3L373.7 359.7M634.6 356.8L665.0 353.1M597.9 413.5L590.6 403.1M621.1 438.5L658.6 427.8M530.4 446.1L482.5 453.5M481.4 305.8L506.6 308.3M462.6 332.8L487.9 330.5M674.1 289.2L695.7 288.7M570.5 342.7L571.0 347.7M786.2 360.8L768.8 367.4M561.5 298.1L572.0 295.2M456.8 340.2L468.7 343.6M697.8 318.4L679.3 321.2M628.0 404.3L624.7 391.1M724.4 352.5L737.0 356.7M565.2 455.6L605.1 470.1M569.2 418.0L543.3 429.9M568.5 528.4L540.0 504.4M709.8 306.1L690.6 303.6M793.2 365.0L768.8 367.4M674.2 458.9L731.1 467.1M729.9 367.6L754.8 360.8M486.2 348.6L505.0 352.5M674.2 458.9L715.6 452.9M712.0 293.1L689.2 295.3M558.7 326.9L552.8 323.0M569.2 418.0L539.1 411.5M624.7 391.1L604.2 395.9M608.9 385.3L624.7 391.1M419.0 344.0L413.0 340.0M811.4 449.3L864.2 478.2M817.4 480.1L873.6 505.8M775.2 402.2L839.5 426.0M683.8 289.6L733.7 317.6M814.5 445.0L848.8 463.2M715.7 322.9L750.6 338.7M824.7 471.4L872.0 493.0M794.8 431.9L852.8 464.7M757.6 351.2L807.3 381.6M781.6 380.7L807.0 392.8M698.0 297.9L730.7 318.8M700.0 315.3L759.4 343.3M774.6 378.3L806.2 391.1M808.2 433.5L846.1 456.1M697.0 294.9L726.7 308.1M820.6 472.8L873.2 494.1M779.5 380.2L815.0 397.5M673.2 280.6L731.0 304.1M674.9 265.1L727.3 300.4M786.7 421.4L851.6 455.9M698.9 314.3L751.3 338.9M775.7 375.3L817.9 400.1M712.8 319.9L749.6 338.6M791.0 390.3L820.5 400.0M717.6 323.7L779.2 355.2M750.8 368.9L812.5 389.2M799.0 402.7L830.4 422.2M813.8 450.5L870.9 486.4M496.2 567.0L516.8 582.2M516.8 582.2L536.3 600.6M536.3 600.6L549.3 615.8M549.3 615.8L566.6 627.7M566.6 627.7L592.6 640.0M592.6 640.0L620.8 650.5M620.8 650.5L683.6 665.6M683.6 665.6L730.0 682.0M730.0 682.0L765.3 695.4M765.3 695.4L876.0 680.3M876.0 680.3L864.0 660.0M864.0 660.0L856.6 639.4M856.6 639.4L850.5 619.4M850.5 619.4L842.0 599.2M842.0 599.2L831.0 582.8M831.0 582.8L820.0 565.0M820.0 565.0L823.7 550.5M516.8 582.2L644.6 549.7M516.8 582.2L673.8 555.2M536.3 600.6L644.6 549.7M536.3 600.6L673.8 555.2M549.3 615.8L673.8 555.2M566.6 627.7L673.8 555.2M592.6 640.0L673.8 555.2M592.6 640.0L712.8 558.5M620.8 650.5L712.8 558.5M683.6 665.6L712.8 558.5M683.6 665.6L850.5 619.4M683.6 665.6L856.6 639.4M730.0 682.0L856.6 639.4M730.0 682.0L864.0 660.0M765.3 695.4L864.0 660.0M712.8 558.5L850.5 619.4M751.9 561.0L850.5 619.4M751.9 561.0L842.0 599.2M751.9 561.0L831.0 582.8M797.0 556.5L831.0 582.8M797.0 556.5L820.0 565.0M712.8 558.5L751.9 561.0M842.0 599.2L877.3 599.2M842.0 599.2L867.6 595.0M850.5 619.4L894.4 625.2M850.5 619.4L878.5 614.5M856.6 639.4L888.3 640.6M864.0 660.0L883.4 660.0M831.0 582.8L866.4 584.5M831.0 582.8L857.0 576.0M820.0 565.0L856.6 573.0M820.0 565.0L855.4 563.4M823.7 550.5L846.9 544.4M848.0 545.0L870.0 548.0M447.6 433.9L468.4 426.8M468.4 426.8L488.7 420.6M488.7 420.6L510.0 415.8M510.0 415.8L532.7 409.3M532.7 409.3L555.1 406.8M555.1 406.8L572.4 402.2M572.4 402.2L595.2 399.8M616.0 398.6L639.9 397.6M639.9 397.6L659.3 397.7M680.7 397.8L704.8 400.2M704.8 400.2L728.1 405.4M728.1 405.4L743.2 408.8M432.5 429.0L458.4 424.5M458.4 424.5L483.1 419.0M505.3 414.1L529.0 411.5M529.0 411.5L553.0 408.5M553.0 408.5L581.3 407.0M581.3 407.0L598.1 407.3M650.6 405.3L671.3 405.8M671.3 405.8L694.3 408.8M694.3 408.8L722.2 411.3M744.7 417.8L765.1 420.5M790.7 424.4L813.0 431.9M356.7 384.2L379.2 377.0M379.2 377.0L393.7 367.6M393.7 367.6L414.3 361.5M455.0 351.8L467.7 346.8M467.7 346.8L490.8 338.4M505.5 336.8L526.5 333.8M543.2 331.0L565.9 331.4M565.9 331.4L579.7 326.0M579.7 326.0L604.6 324.7M604.6 324.7L616.6 325.3M616.6 325.3L637.2 326.4M637.2 326.4L655.6 324.6M655.6 324.6L674.3 326.9M674.3 326.9L695.6 328.2M695.6 328.2L707.6 329.0M707.6 329.0L731.7 332.3M498.9 300.7L523.4 298.2M523.4 298.2L549.1 295.6M549.1 295.6L578.2 292.0M578.2 292.0L598.6 293.1M598.6 293.1L628.4 292.1M651.9 293.6L682.2 292.3M493.6 434.4L515.2 427.8M515.2 427.8L540.0 424.7M540.0 424.7L563.7 421.8M563.7 421.8L590.0 420.1M590.0 420.1L616.9 417.5M692.5 421.5L716.7 420.1M716.7 420.1L739.7 423.9M787.7 430.0L815.7 437.0M815.7 437.0L838.9 441.7M443.0 448.4L462.4 442.6M462.4 442.6L480.5 432.6M480.5 432.6L500.8 426.0M500.8 426.0L520.3 421.3M566.6 410.7L584.3 406.6M584.3 406.6L602.8 403.0M625.2 402.6L645.9 400.8M645.9 400.8L663.4 400.3M686.8 403.1L704.2 402.6M727.6 406.6L746.8 407.7M746.8 407.7L764.9 413.0M764.9 413.0L786.4 416.9M786.4 416.9L808.8 425.4M808.8 425.4L827.4 430.7M827.4 430.7L846.7 441.6M447.7 328.8L471.9 322.1M565.9 303.4L576.6 302.0M576.6 302.0L603.1 300.0M603.1 300.0L628.8 298.9M628.8 298.9L651.3 293.9M681.6 296.2L710.6 296.0M396.7 394.6L412.6 385.1M412.6 385.1L427.0 382.1M449.5 375.1L466.1 368.1M466.1 368.1L485.8 366.7M485.8 366.7L506.5 361.3M506.5 361.3L520.9 356.1M520.9 356.1L541.9 356.2M541.9 356.2L556.4 351.7M556.4 351.7L575.9 348.4M575.9 348.4L588.9 346.9M588.9 346.9L613.2 344.3M613.2 344.3L628.5 341.4M628.5 341.4L650.9 345.6M666.5 344.9L683.3 345.9M702.1 346.9L720.8 349.0M742.1 349.4L757.6 353.1M435.4 413.3L461.7 406.3M461.7 406.3L475.9 407.0M475.9 407.0L496.9 397.4M496.9 397.4L515.0 399.1M515.0 399.1L537.1 395.0M557.9 392.6L574.3 388.1M574.3 388.1L595.5 387.2M595.5 387.2L614.0 389.6M614.0 389.6L634.8 387.0M634.8 387.0L653.5 387.5M653.5 387.5L674.7 385.3M674.7 385.3L692.9 389.5M692.9 389.5L713.6 387.5M713.6 387.5L730.3 387.3M730.3 387.3L749.7 393.5M770.7 392.8L789.3 396.3M789.3 396.3L809.8 399.0M356.6 384.2L378.6 381.3M413.7 371.5L431.0 369.4M431.0 369.4L450.2 362.6M450.2 362.6L464.8 362.3M464.8 362.3L485.2 358.9M502.7 354.2L521.6 355.2M521.6 355.2L539.9 350.2M556.7 349.5L575.8 350.2M575.8 350.2L597.5 348.5M610.8 347.9L629.8 347.3M663.6 349.4L683.3 348.5M683.3 348.5L703.1 350.4M703.1 350.4L723.7 353.2M723.7 353.2L738.5 353.8M773.2 360.6L788.4 363.0M442.8 454.8L464.5 448.4M464.5 448.4L482.4 439.3M482.4 439.3L502.7 433.2M502.7 433.2L524.2 426.1M541.7 421.3L565.3 420.3M565.3 420.3L586.7 414.3M625.7 412.7L647.9 412.6M647.9 412.6L665.3 410.7M665.3 410.7L686.4 412.5M686.4 412.5L707.1 417.2M707.1 417.2L725.1 419.8M725.1 419.8L747.5 426.4M747.5 426.4L769.4 426.8M789.8 435.3L808.9 441.1M808.9 441.1L830.8 449.9M830.8 449.9L850.9 456.3M399.2 377.3L429.2 362.9M429.2 362.9L453.4 352.6M574.7 318.6L602.0 311.8M602.0 311.8L629.6 310.9M629.6 310.9L656.8 307.8M656.8 307.8L689.1 310.4M689.1 310.4L715.9 311.8M370.2 384.8L401.5 370.0M401.5 370.0L429.9 359.1M429.9 359.1L461.5 346.6M461.5 346.6L492.2 337.8M492.2 337.8L515.9 328.1M515.9 328.1L534.5 323.7M570.7 316.3L577.7 315.0M577.7 315.0L609.6 311.1M609.6 311.1L641.5 309.3M641.5 309.3L667.4 306.1M364.9 374.8L398.8 365.8M398.8 365.8L429.4 356.6M429.4 356.6L455.1 349.4M511.0 334.6L543.3 329.1M573.1 325.0L599.8 319.4M599.8 319.4L630.5 317.4M630.5 317.4L659.3 317.3M659.3 317.3L686.7 313.8M686.7 313.8L714.6 316.0M489.7 422.5L507.2 417.4M507.2 417.4L525.9 414.8M525.9 414.8L549.5 409.3M549.5 409.3L564.9 404.4M564.9 404.4L582.7 404.7M603.1 402.8L622.9 401.8M639.2 403.3L654.9 400.4M654.9 400.4L676.0 401.9M676.0 401.9L694.7 404.3M694.7 404.3L713.5 406.9M713.5 406.9L734.9 410.1M734.9 410.1L752.7 412.8M752.7 412.8L768.9 418.0M768.9 418.0L791.8 424.0M791.8 424.0L810.8 430.6M810.8 430.6L829.6 434.9M829.6 434.9L848.6 444.0M433.2 418.8L457.3 411.2M486.7 400.9L509.3 393.3M509.3 393.3L533.2 386.9M533.2 386.9L556.4 380.9M556.4 380.9L578.4 375.5M628.5 373.4L652.9 369.5M652.9 369.5L678.2 371.1M678.2 371.1L705.1 372.0M705.1 372.0L724.4 372.7M751.8 376.4L775.4 380.2M361.6 379.0L385.8 371.9M385.8 371.9L408.6 363.5M453.7 350.9L474.9 347.4M500.8 344.3L521.8 341.1M566.9 335.5L592.9 333.6M592.9 333.6L612.7 331.4M612.7 331.4L636.7 333.1M636.7 333.1L658.8 333.9M658.8 333.9L680.3 335.9M680.3 335.9L705.7 340.1M727.6 342.7L750.0 346.2M750.0 346.2L770.6 352.2M770.6 352.2L797.2 358.4M377.3 390.0L397.7 382.9M397.7 382.9L416.5 372.8M416.5 372.8L435.9 366.4M435.9 366.4L452.8 358.6M452.8 358.6L472.6 350.2M472.6 350.2L495.5 346.8M495.5 346.8L515.1 341.4M532.8 336.9L551.8 332.5M551.8 332.5L573.1 328.8M609.8 325.6L628.1 325.9M628.1 325.9L646.7 322.5M646.7 322.5L666.0 324.4M666.0 324.4L679.9 325.4M679.9 325.4L705.9 323.5M705.9 323.5L722.7 328.4M358.9 391.0L373.3 383.2M393.7 380.2L411.0 374.6M432.9 373.0L451.4 365.9M451.4 365.9L471.5 363.1M487.2 360.8L504.4 356.7M524.9 355.0L540.9 350.2M540.9 350.2L560.9 349.5M560.9 349.5L580.2 347.9M580.2 347.9L599.4 348.1M599.4 348.1L617.5 345.3M637.8 344.4L653.5 347.3M653.5 347.3L671.2 348.1M671.2 348.1L694.7 349.2M765.1 353.9L779.3 357.3M468.1 420.3L490.0 413.9M490.0 413.9L519.3 405.3M549.2 399.8L573.9 395.2M573.9 395.2L599.5 391.3M626.0 388.0L650.4 385.8M650.4 385.8L677.7 383.4M727.6 387.9L755.4 393.1M755.4 393.1L777.3 391.9M777.3 391.9L802.1 397.9M802.1 397.9L829.8 404.5M436.9 333.2L458.5 323.5M483.6 314.8L487.2 314.0M513.1 308.1L528.7 304.4M528.7 304.4L554.1 301.7M575.1 299.8L599.8 297.1M599.8 297.1L622.3 298.5M622.3 298.5L645.2 298.4M670.2 301.3L694.0 307.0M694.0 307.0L714.5 309.8M451.6 397.4L471.5 392.2M471.5 392.2L489.1 384.6M489.1 384.6L507.9 378.8M507.9 378.8L527.9 375.6M527.9 375.6L544.8 368.2M544.8 368.2L567.6 369.3M567.6 369.3L584.0 364.8M584.0 364.8L601.4 365.7M601.4 365.7L617.2 361.3M617.2 361.3L638.4 359.4M638.4 359.4L656.5 357.4M656.5 357.4L675.6 356.9M696.6 360.0L709.8 357.6M709.8 357.6L730.3 362.4M730.3 362.4L746.7 366.0M746.7 366.0L767.8 366.3M767.8 366.3L783.0 370.1M783.0 370.1L804.0 375.0M463.9 455.4L482.8 450.0M501.3 443.9L526.4 437.7M526.4 437.7L543.5 434.6M564.7 429.0L586.6 425.3M586.6 425.3L606.9 426.2M606.9 426.2L626.9 422.5M626.9 422.5L646.2 419.7M709.7 418.7L731.2 418.2M750.1 417.2L771.2 418.4M812.7 423.5L836.9 428.2M426.2 391.0L452.7 381.1M452.7 381.1L481.0 372.8M509.3 365.1L537.6 358.5M537.6 358.5L566.1 352.4M566.1 352.4L600.4 352.3M600.4 352.3L627.5 347.6M627.5 347.6L658.2 345.9M684.7 346.8L713.0 347.4M713.0 347.4L740.9 346.8M502.6 300.5L526.5 297.9M526.5 297.9L540.8 295.0M540.8 295.0L562.8 294.2M562.8 294.2L582.7 292.7M582.7 292.7L602.0 293.1M602.0 293.1L625.3 292.3M660.5 292.5L682.5 293.2M682.5 293.2L701.0 294.5M456.4 361.7L474.3 353.7M474.3 353.7L496.8 350.8M496.8 350.8L521.5 346.7M545.6 342.1L564.1 338.8M564.1 338.8L588.2 335.6M588.2 335.6L611.3 335.9M611.3 335.9L633.0 337.2M656.9 342.7L675.9 342.2M675.9 342.2L704.9 344.8M722.9 350.6L746.6 354.6M746.6 354.6L769.1 364.1M769.1 364.1L796.2 371.1M462.1 418.6L488.1 412.3M488.1 412.3L508.9 406.0M537.6 402.4L563.0 396.4M563.0 396.4L584.6 395.0M584.6 395.0L609.2 392.7M659.8 391.6L684.3 390.5M684.3 390.5L706.4 393.0M732.2 393.6L756.9 399.6M756.9 399.6L785.1 403.8M785.1 403.8L809.9 407.6M809.9 407.6L831.4 413.0M439.9 380.5L463.9 375.4M463.9 375.4L485.9 368.4M485.9 368.4L509.4 364.3M509.4 364.3L537.5 357.1M537.5 357.1L560.1 353.2M560.1 353.2L591.3 351.4M591.3 351.4L612.4 350.0M612.4 350.0L635.3 350.3M635.3 350.3L658.1 350.3M658.1 350.3L686.5 349.9M686.5 349.9L713.5 352.3M713.5 352.3L735.3 354.4M762.5 356.7L786.9 362.3M786.9 362.3L813.3 367.4M424.8 343.1L450.3 338.6M450.3 338.6L479.3 332.8M479.3 332.8L507.7 328.0M507.7 328.0L537.1 324.3M561.9 319.9L565.5 319.3M565.5 319.3L589.3 318.3M589.3 318.3L623.5 316.2M623.5 316.2L646.2 319.6M646.2 319.6L673.0 316.6M426.0 402.8L458.4 395.5M458.4 395.5L489.9 394.1M489.9 394.1L517.9 389.4M544.0 386.3L578.9 384.7M578.9 384.7L608.9 383.1M608.9 383.1L640.8 383.8M640.8 383.8L668.0 385.8M694.5 385.3L727.3 388.3M727.3 388.3L754.2 395.3M754.2 395.3L782.8 398.2M782.8 398.2L812.2 404.5M455.9 444.2L476.1 433.2M476.1 433.2L495.3 429.5M551.6 406.9L567.8 404.5M614.0 394.3L630.5 390.3M630.5 390.3L646.3 389.7M668.6 389.1L685.0 387.0M705.9 387.3L724.9 389.4M747.1 387.7L766.6 392.4M766.6 392.4L783.9 395.6M783.9 395.6L804.4 399.7M365.8 369.7L395.0 358.4M395.0 358.4L423.3 345.3M447.7 342.4L478.2 332.6M478.2 332.6L504.9 327.7M504.9 327.7L532.1 326.0M532.1 326.0L540.0 324.8M555.7 322.5L559.6 321.9M559.6 321.9L586.3 319.6M586.3 319.6L612.4 320.0M612.4 320.0L642.3 322.2M642.3 322.2L670.8 326.0M670.8 326.0L699.6 330.3M728.5 337.5L756.2 344.3M783.4 353.6L805.2 364.1M382.2 372.1L401.1 361.7M401.1 361.7L420.8 352.8M420.8 352.8L435.4 341.6M435.4 341.6L458.0 335.0M458.0 335.0L479.8 325.5M479.8 325.5L496.9 322.1M496.9 322.1L507.7 318.7M578.7 306.7L594.4 305.2M613.0 302.9L631.5 302.4M631.5 302.4L655.0 301.9M655.0 301.9L672.2 304.6M691.8 307.7L709.6 310.6M447.1 437.9L477.2 425.5M497.3 417.3L516.3 406.5M516.3 406.5L537.3 398.7M537.3 398.7L555.4 394.4M555.4 394.4L578.2 386.3M578.2 386.3L602.8 381.0M602.8 381.0L620.6 378.4M645.5 377.1L664.4 374.2M664.4 374.2L689.9 371.9M689.9 371.9L709.9 372.5M709.9 372.5L730.0 372.0M755.3 374.4L773.6 379.8M773.6 379.8L796.3 382.4M481.1 423.4L509.0 419.7M509.0 419.7L537.1 415.7M537.1 415.7L562.5 410.6M562.5 410.6L593.6 409.9M593.6 409.9L620.9 407.0M651.7 406.9L678.0 406.9M678.0 406.9L705.8 409.4M705.8 409.4L736.9 411.5M736.9 411.5L768.8 414.9M793.6 417.0L825.5 422.1M426.3 472.6L445.3 465.8M445.3 465.8L463.6 458.9M487.5 454.4L511.0 447.1M511.0 447.1L530.1 446.1M530.1 446.1L549.8 440.7M549.8 440.7L574.9 435.8M574.9 435.8L590.4 432.9M658.8 425.6L680.0 426.8M698.3 425.2L719.8 426.4M741.2 430.6L764.4 429.9M784.0 431.9L806.4 435.9M806.4 435.9L825.7 438.9M449.7 439.3L482.8 429.4M482.8 429.4L508.9 420.9M508.9 420.9L538.7 413.9M538.7 413.9L561.6 409.3M618.9 405.0L642.7 408.6M701.6 413.7L728.2 418.6M728.2 418.6L756.0 429.0M756.0 429.0L784.2 435.1M360.2 391.0L379.8 382.4M404.9 377.9L430.8 371.7M430.8 371.7L450.8 365.2M450.8 365.2L475.3 361.8M564.1 347.0L583.5 344.5M583.5 344.5L604.3 344.7M604.3 344.7L631.1 345.3M631.1 345.3L650.9 343.0M650.9 343.0L671.4 344.5M671.4 344.5L693.9 345.9M693.9 345.9L716.8 347.0M738.2 351.3L763.6 351.8M763.6 351.8L781.8 355.8M442.7 450.9L470.3 442.3M491.3 434.7L517.0 429.6M517.0 429.6L541.3 425.6M541.3 425.6L571.6 420.4M571.6 420.4L591.9 418.0M591.9 418.0L616.1 417.7M643.2 416.0L665.5 415.8M665.5 415.8L693.8 414.0M693.8 414.0L721.0 418.5M721.0 418.5L745.0 420.4M745.0 420.4L768.0 424.5M794.7 428.1L821.6 433.3M821.6 433.3L844.3 439.1M535.8 418.2L560.8 413.8M560.8 413.8L596.7 409.3M596.7 409.3L619.3 407.9M619.3 407.9L650.8 407.9M650.8 407.9L681.8 409.3M681.8 409.3L705.2 410.2M735.8 416.1L762.9 420.9M762.9 420.9L793.2 425.5M819.1 431.4L847.6 440.0M658.4 299.3L683.9 300.9M608.5 298.6L643.3 296.5M636.8 293.9L678.0 291.1M638.0 277.7L676.4 277.6M672.1 278.0L710.4 279.3M609.3 282.7L666.8 281.3M674.0 298.9L715.0 297.7M643.1 297.8L678.2 300.2M594.8 277.8L639.8 277.3M600.0 284.2L670.2 282.9M592.0 291.7L641.6 292.1M659.5 276.1L705.6 274.2M631.9 276.6L667.3 276.4M668.0 284.5L701.1 286.4M610.2 272.6L642.9 272.0M603.0 292.1L630.6 292.1M597.6 279.8L655.5 278.2M597.8 284.1L651.1 284.9M614.7 283.5L641.7 283.2M599.5 284.4L626.6 285.1M606.5 280.4L660.8 281.5M638.8 283.1L694.9 283.4M664.8 294.4L709.4 292.5M638.1 285.0L693.5 286.4M668.2 273.7L715.0 272.9M908.0 306.0L905.8 308.9M980.0 311.0L977.1 307.8M931.8 320.5L940.2 315.3M892.7 322.0L894.2 328.0M928.2 309.9L916.0 314.5M892.0 316.8L879.5 314.2M931.8 320.5L940.9 324.3M923.3 332.9L899.6 337.5M889.0 344.0L907.6 342.0M965.0 318.0L931.8 320.5M923.3 332.9L933.5 336.1M852.8 323.2L875.7 325.3M916.7 303.7L925.3 301.3M865.0 338.0L891.9 333.3M849.0 327.0L868.0 308.0M899.6 337.5L933.5 336.1M984.5 302.0L1002.3 305.0M975.0 305.0L944.9 305.4M894.2 328.0L876.4 330.1M1023.0 303.0L1031.0 307.0M961.0 325.0L940.9 324.3M1008.5 301.0L1002.3 305.0M1029.0 310.2L1010.0 313.0M965.0 318.0L940.2 315.3M955.0 335.5L933.5 336.1M916.0 314.5L931.8 320.5M975.0 305.0L984.5 302.0M849.0 327.0L876.4 330.1M859.7 334.3L891.9 333.3M925.3 301.3L934.0 299.0M916.0 314.5L910.6 320.0M856.6 319.4L864.2 311.8M928.2 309.9L942.3 312.4M984.5 302.0L994.0 299.0M894.2 328.0L913.6 328.9M935.1 329.0L940.9 324.3M894.4 311.3L905.8 308.9M951.8 309.5L942.3 312.4M865.0 338.0L859.7 334.3M916.0 314.5L940.2 315.3M925.3 301.3L944.7 302.1M865.0 338.0L899.6 337.5M1029.0 310.2L1005.3 308.4M969.0 302.0L944.7 302.1M1023.0 303.0L1002.3 305.0M980.0 311.0L951.8 309.5M994.0 299.0L1008.5 301.0M894.4 311.3L879.5 314.2M892.7 322.0L910.6 320.0M959.0 328.5L935.1 329.0M860.4 315.6L879.5 314.2M963.0 299.0L969.0 302.0M1010.0 313.0L980.0 311.0M916.0 314.5L894.4 311.3M1005.3 308.4L977.1 307.8M888.0 307.0L894.4 311.3M972.5 314.5L942.3 312.4M944.9 305.4L977.1 307.8M969.0 302.0L975.0 305.0M892.0 316.8L916.0 314.5M864.2 311.8L894.4 311.3M910.6 320.0L880.7 319.5M980.0 311.0L972.5 314.5M963.0 321.5L931.8 320.5M940.2 315.3L942.3 312.4M916.0 314.5L879.5 314.2M852.8 323.2L868.0 308.0M914.0 345.5L907.6 342.0M1031.0 307.0L1029.0 310.2M859.7 334.3L876.4 330.1M972.5 314.5L965.0 318.0M892.7 322.0L880.7 319.5M975.0 305.0L1002.3 305.0M1029.0 310.2L1027.0 313.5M877.0 341.0L907.6 342.0M918.8 325.5L894.2 328.0M957.0 332.0L923.3 332.9M963.0 321.5L940.9 324.3M955.0 335.5L951.8 339.5M965.0 318.0L963.0 321.5M892.0 316.8L910.6 320.0M951.8 309.5L977.1 307.8M948.7 343.6L939.0 347.0M916.7 303.7L944.9 305.4M963.0 321.5L961.0 325.0M875.7 325.3L876.4 330.1M959.0 328.5L940.9 324.3M1027.0 313.5L1010.0 313.0M918.8 325.5L935.1 329.0M951.8 339.5L948.7 343.6M1002.3 305.0L977.1 307.8M918.8 325.5L913.6 328.9M944.9 305.4L951.8 309.5M948.7 343.6L927.9 342.7M1008.5 301.0L1023.0 303.0M934.0 299.0L944.7 302.1M934.0 299.0L963.0 299.0M961.0 325.0L959.0 328.5M856.6 319.4L880.7 319.5M892.7 322.0L875.7 325.3M877.0 341.0L899.6 337.5M888.0 307.0L905.8 308.9M939.0 347.0L927.9 342.7M1031.0 307.0L1005.3 308.4M963.0 299.0L944.7 302.1M868.0 308.0L888.0 307.0M928.2 309.9L894.4 311.3M891.9 333.3L894.2 328.0M891.9 333.3L876.4 330.1M908.0 306.0L928.2 309.9M852.8 323.2L856.6 319.4M928.2 309.9L905.8 308.9M959.0 328.5L957.0 332.0M894.2 328.0L875.7 325.3M922.2 339.2L907.6 342.0M980.0 311.0L1005.3 308.4M892.0 316.8L880.7 319.5M849.0 327.0L854.3 330.7M868.0 308.0L894.4 311.3M980.0 311.0L942.3 312.4M918.8 325.5L931.8 320.5M957.0 332.0L955.0 335.5M864.2 311.8L879.5 314.2M1005.3 308.4L1002.3 305.0M918.8 325.5L910.6 320.0M928.2 309.9L951.8 309.5M972.5 314.5L940.2 315.3M891.9 333.3L913.6 328.9M852.8 323.2L864.2 311.8M856.6 319.4L860.4 315.6M914.0 345.5L927.9 342.7M951.8 339.5L922.2 339.2M951.8 339.5L933.5 336.1M860.4 315.6L864.2 311.8M914.0 345.5L889.0 344.0M975.0 305.0L977.1 307.8M928.2 309.9L944.9 305.4M918.8 325.5L940.9 324.3M891.9 333.3L899.6 337.5M916.7 303.7L944.7 302.1M922.2 339.2L899.6 337.5M889.0 344.0L877.0 341.0M916.0 314.5L942.3 312.4M922.2 339.2L933.5 336.1M854.3 330.7L876.4 330.1M984.5 302.0L1008.5 301.0M948.7 343.6L945.5 347.6M923.3 332.9L891.9 333.3M864.2 311.8L868.0 308.0M1031.0 307.0L1002.3 305.0M849.0 327.0L852.8 323.2M908.0 306.0L944.9 305.4M852.8 323.2L880.7 319.5M934.0 299.0L950.0 297.0M877.0 341.0L865.0 338.0M957.0 332.0L935.1 329.0M899.6 337.5L907.6 342.0M944.9 305.4L944.7 302.1M860.4 315.6L892.0 316.8M888.0 307.0L908.0 306.0M1010.0 313.0L1005.3 308.4M951.8 339.5L927.9 342.7M994.0 299.0L1023.0 303.0M945.5 347.6L939.0 347.0M860.4 315.6L880.7 319.5M935.1 329.0L913.6 328.9M875.7 325.3L880.7 319.5M918.8 325.5L892.7 322.0M931.8 320.5L910.6 320.0M923.3 332.9L935.1 329.0M927.9 342.7L907.6 342.0M969.0 302.0L944.9 305.4M923.3 332.9L913.6 328.9M849.0 327.0L875.7 325.3M859.7 334.3L854.3 330.7M939.0 347.0L914.0 345.5M950.0 297.0L963.0 299.0M922.2 339.2L927.9 342.7M957.0 332.0L933.5 336.1M908.0 306.0L916.7 303.7M342.6 361.6L425.0 349.0M337.9 365.7L460.0 354.0M339.7 360.8L500.0 362.0M343.9 360.0L470.0 378.0M337.0 362.8L413.0 397.0M341.2 362.9L520.0 385.0M367.2 371.6L482.1 360.1M346.6 385.6L410.2 372.2M376.3 378.5L490.5 371.8M345.1 366.7L445.8 357.8M352.0 524.0L560.0 499.0M354.0 537.0L470.0 526.0M352.0 524.0L440.0 526.0M372.0 509.0L520.0 500.0M354.0 537.0L560.0 520.0M387.0 543.0L600.0 520.0M396.0 481.0L470.0 490.0M372.0 509.0L450.0 512.0M406.0 475.0L560.0 470.0M564.0 301.5L544.5 327.0M476.0 311.5L564.0 301.5M476.0 311.5L545.0 327.5M564.0 301.5L589.0 309.0M589.0 309.0L545.0 327.5" stroke="#746c00" stroke-width="1" fill="none"/>
<path d="M1003 382.5L1033 394L1048 403.6M1009 394L1033 394M1028 398L1033 393" stroke="#746c00" fill="none"/>
<path d="M545 254L549 258L553 254M799 243L803 247L807 243" stroke="#8f8f8f" fill="none"/>
</svg>
</body></html>
